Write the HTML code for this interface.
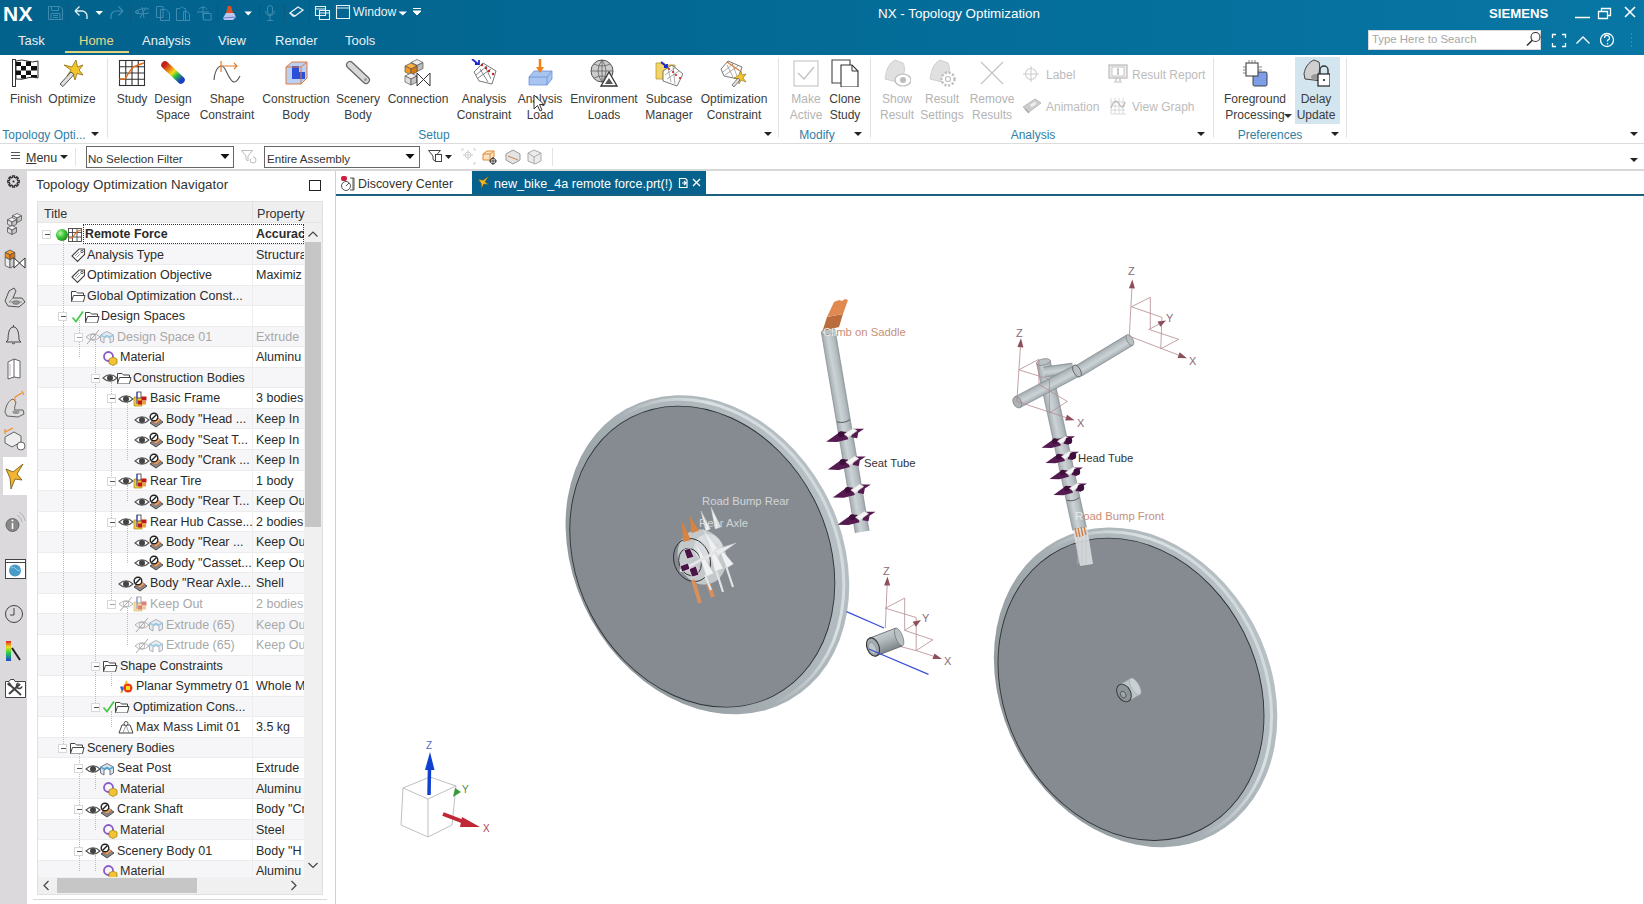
<!DOCTYPE html>
<html><head><meta charset="utf-8">
<style>
*{margin:0;padding:0;box-sizing:border-box}
html,body{width:1644px;height:904px;overflow:hidden;background:#fff;font-family:"Liberation Sans",sans-serif;color:#333}
.a{position:absolute}
#top{left:0;top:0;width:1644px;height:55px;background:linear-gradient(90deg,#02628c 0%,#036a95 45%,#0876a4 100%)}
.tw{color:#fff;white-space:nowrap}
.tab{position:absolute;top:33px;font-size:13px;color:#e8f0f4;white-space:nowrap}
#rib{left:0;top:55px;width:1644px;height:89px;background:#fff;border-bottom:1px solid #dcdcdc}
.rl{position:absolute;font-size:12px;color:#3c3c3c;text-align:center;line-height:16px;white-space:nowrap;transform:translateX(-50%)}
.rl.dis{color:#b4b4b4}
.gl{position:absolute;top:73px;font-size:12px;color:#2f7ea6;white-space:nowrap;transform:translateX(-50%)}
.sep{position:absolute;top:3px;width:1px;height:80px;background:#e2e2e2}
.dd{position:absolute;width:0;height:0;border-left:4px solid transparent;border-right:4px solid transparent;border-top:4px solid #222}
#sel{left:0;top:144px;width:1644px;height:27px;background:#fff;border-bottom:2px solid #d8d8d8}
#strip{left:0;top:171px;width:28px;height:733px;background:#dbd9dc;border-right:1px solid #c4c4c6}
#nav{left:27px;top:171px;width:309px;height:733px;background:#fff;border-right:1px solid #d0d0d0}
#vp{left:336px;top:171px;width:1308px;height:733px;background:#fff}
.row{position:absolute;left:0;width:266px;height:20.55px;font-size:13px;line-height:20px;white-space:nowrap;color:#2a2a2a}
</style></head><body>
<div id="top" class="a">
  <div class="a tw" style="left:3px;top:2px;font-size:21px;font-weight:bold;letter-spacing:0.3px">NX</div>
  <svg class="a" style="left:0;top:0" width="440" height="28" viewBox="0 0 440 28">
    <g stroke="#0a5a7e" stroke-width="1"><path d="M68.5 4V22M130.5 4V22M217.5 4V22M259.5 4V22M284.5 4V22M309.5 4V22"/></g>
    <!-- save dim -->
    <g fill="none" stroke="#3f8bb0" stroke-width="1"><path d="M48.5 6.5H60L62.5 9V19.5H48.5Z M51.5 6.5V10.5H58.5V6.5 M51 13.5H60V19.5H51Z M53 15.5H58 M53 17.5H58"/></g>
    <!-- undo -->
    <path d="M75 11 L79.5 6.5 M75 11 L79.5 15.5 M75 11 H82 A5 5 0 0 1 87 16 V19" fill="none" stroke="#e6f0f5" stroke-width="1.3"/>
    <path d="M95.5 11 H103 L99.2 15 Z" fill="#fff"/>
    <!-- redo dim -->
    <path d="M123 11 L118.5 6.5 M123 11 L118.5 15.5 M123 11 H116 A5 5 0 0 0 111 16 V19" fill="none" stroke="#3f8bb0" stroke-width="1.2"/>
    <!-- cut copy paste -->
    <g fill="none" stroke="#3f8bb0" stroke-width="1"><path d="M136 11 Q140 8 149 9 M136 13 Q141 15 149 13 M142 7 L144 18 M146 7 L140 18"/><circle cx="137" cy="12" r="1.5"/>
    <path d="M156.5 6.5H163V17.5H156.5Z M160.5 9.5H166L169.5 13V20.5H160.5Z"/>
    <path d="M176.5 8.5H180L182 6.5L184 8.5H185.5V20.5H176.5Z M183.5 11.5H187L189.5 14V20.5H183.5Z"/>
    <path d="M197 12H209M203 6V18 M199 9.5 A4.5 4.5 0 0 1 207 9.5"/><path d="M203.5 13.5H211V20H203.5Z"/></g>
    <!-- brush -->
    <path d="M228 6 L231 6 L233 13 L226 13 Z" fill="#e05020"/><path d="M223 18 L226 13 L234 13 L236 17 L233 20 L224 20 Z" fill="#b8c8f0"/><path d="M223 18 L236 17" stroke="#6a80d0"/>
    <path d="M244.5 11.5 H252 L248.2 15.5 Z" fill="#fff"/>
    <!-- mic dim -->
    <g fill="none" stroke="#3f8bb0" stroke-width="1"><rect x="267.5" y="5.5" width="5" height="9" rx="2.5"/><path d="M265.5 11 A4.5 4.5 0 0 0 274.5 11 M270 16V20M267 20.5H273"/></g>
    <!-- eraser -->
    <path d="M290 13 L298 7 L303 10 L295 16 Z" fill="none" stroke="#e8f0f4" stroke-width="1.3"/><path d="M290 13 L293 16 L295 16" stroke="#e8f0f4" stroke-width="1.3" fill="none"/>
    <!-- windows -->
    <g fill="none" stroke="#e6f0f5" stroke-width="1.1"><path d="M315.5 6.5H325.5V15.5H315.5Z M315.5 9H325.5 M319.5 10.5H329.5V19.5H319.5Z M319.5 13H329.5"/>
    <path d="M336.5 5.5H349.5V18.5H336.5Z M336.5 8H349.5"/></g>
    <path d="M413 8.5H421M413 11H421L417 15Z" fill="#fff" stroke="#fff" stroke-width="1"/>
    <path d="M398.5 11.5 H407 L402.7 15.5 Z" fill="#fff"/>
  </svg>
  <div class="a tw" style="left:353px;top:5px;font-size:12.2px;color:#e8f2f6">Window</div>
  <div class="a tw" style="left:0;width:1918px;text-align:center;top:6px;font-size:13.4px">NX - Topology Optimization</div>
  <div class="a tw" style="left:1489px;top:6px;font-size:13.2px;font-weight:bold">SIEMENS</div>
  <svg class="a" style="left:1560px;top:0" width="84" height="28" viewBox="0 0 84 28">
    <path d="M15 17.5H30" stroke="#fff" stroke-width="1.5"/>
    <g fill="none" stroke="#fff" stroke-width="1.3"><path d="M38.5 11.5H47.5V18.5H38.5Z M41.5 11.5V8.5H50.5V15.5H47.5"/></g>
    <path d="M65 7 L75 17 M75 7 L65 17" stroke="#fff" stroke-width="1.6"/>
  </svg>
  <div class="tab" style="left:18px">Task</div>
  <div class="tab" style="left:79px;color:#ead98a">Home</div>
  <div class="a" style="left:65px;top:51px;width:64px;height:2px;background:#e2d27a"></div>
  <div class="tab" style="left:142px">Analysis</div>
  <div class="tab" style="left:218px">View</div>
  <div class="tab" style="left:275px">Render</div>
  <div class="tab" style="left:345px">Tools</div>
  <div class="a" style="left:1368px;top:30px;width:173px;height:20px;background:#fff;border:1px solid #d8d8d8"></div>
  <div class="a" style="left:1372px;top:33px;font-size:11.4px;color:#a6a6a6;white-space:nowrap">Type Here to Search</div>
  <svg class="a" style="left:1520px;top:28px" width="124" height="24" viewBox="0 0 124 24">
    <circle cx="15.5" cy="9" r="4.5" fill="none" stroke="#333" stroke-width="1.1"/><path d="M12.5 12 L7 17.5" stroke="#333" stroke-width="1.6"/>
    <g fill="none" stroke="#fff" stroke-width="1.3"><path d="M32.5 10V6.5H36 M42 6.5H45.5V10 M45.5 15V18.5H42 M36 18.5H32.5V15"/>
    <path d="M56.5 15.5 L63 9 L69.5 15.5"/><circle cx="87" cy="12" r="6.5"/></g>
    <path d="M84.5 10 A2.5 2.5 0 1 1 87.5 12.3 V13.5" fill="none" stroke="#fff" stroke-width="1.2"/><circle cx="87.5" cy="15.8" r="0.8" fill="#fff"/>
    <path d="M111.5 5V19" stroke="#3f8bb0" stroke-width="1" stroke-dasharray="2 2"/>
  </svg>
</div>
<div id="rib" class="a">
<div class="a" style="left:1295px;top:2px;width:45px;height:67px;background:#d3e5ee"></div>
<svg class="a" style="left:12.0px;top:4px" width="28" height="28" viewBox="0 0 28 28" ><rect x="0.5" y="0.5" width="3" height="27" fill="#fff" stroke="#333" stroke-width="1"/>
<path d="M4 2 Q10 0 15 2 T26 2 L26 19 Q20 17 15 19 T4 20 Z" fill="#fff" stroke="#333" stroke-width="1"/>
<g fill="#111"><rect x="4" y="3" width="5" height="4"/><rect x="14" y="2.5" width="5" height="4.5"/><rect x="9" y="7" width="5" height="4.5"/><rect x="19" y="7" width="6" height="4.5"/><rect x="4" y="11.5" width="5" height="4.5"/><rect x="14" y="11.5" width="5" height="4.5"/><rect x="9" y="16" width="5" height="3.5"/><rect x="19" y="16" width="6" height="2.5"/></g></svg>
<div class="rl" style="left:26px;top:36px">Finish</div>
<svg class="a" style="left:58.0px;top:4px" width="28" height="28" viewBox="0 0 28 28" ><path d="M18 1 L19.5 8 L25 6 L21 11 L25 16 L19 14.5 L17 21 L15 15 L9 17 L13 11 L6 6 L14 8 Z" fill="#f3c52a" stroke="#8a6d10" stroke-width="0.8"/>
<path d="M2 25 L13 13 L16 15.5 L5 27.5 Z" fill="#ddd" stroke="#444" stroke-width="0.9"/></svg>
<div class="rl" style="left:72px;top:36px">Optimize</div>
<svg class="a" style="left:118.0px;top:4px" width="28" height="28" viewBox="0 0 28 28" ><g fill="none" stroke="#333" stroke-width="1.1"><rect x="1.5" y="1.5" width="25" height="25"/><path d="M7.75 1.5V26.5M14 1.5V26.5M20.25 1.5V26.5M1.5 7.75H26.5M1.5 14H26.5M1.5 20.25H26.5"/></g>
<path d="M1.5 20 L7 20 L12 12 L15 8 L20 6 L26 4" fill="none" stroke="#e06a1a" stroke-width="1.4"/></svg>
<div class="rl" style="left:132px;top:36px">Study</div>
<svg class="a" style="left:159.0px;top:4px" width="28" height="28" viewBox="0 0 28 28" ><defs><linearGradient id="gds" x1="0" y1="0" x2="1" y2="1"><stop offset="0" stop-color="#c0231a"/><stop offset="0.3" stop-color="#f08a10"/><stop offset="0.5" stop-color="#e8e020"/><stop offset="0.7" stop-color="#30c040"/><stop offset="1" stop-color="#1a40c0"/></linearGradient></defs>
<line x1="6" y1="6" x2="22" y2="21" stroke="url(#gds)" stroke-width="7.5" stroke-linecap="round"/></svg>
<div class="rl" style="left:173px;top:36px">Design<br>Space</div>
<svg class="a" style="left:213.0px;top:4px" width="28" height="28" viewBox="0 0 28 28" ><path d="M1 21 C2 9, 8 3, 12 10 S 20 31, 27 17" fill="none" stroke="#555" stroke-width="1.1"/>
<path d="M8 2 V13 M8 7 H24 M21 4 L24 7 L21 10" fill="none" stroke="#e07e30" stroke-width="1.2"/></svg>
<div class="rl" style="left:227px;top:36px">Shape<br>Constraint</div>
<svg class="a" style="left:282.0px;top:4px" width="28" height="28" viewBox="0 0 28 28" ><path d="M4 8 L10 3 L25 3 L25 19 L19 25 L4 25 Z" fill="#bcd0f4" stroke="#e07a40" stroke-width="1"/>
<path d="M10 7 L17 7 L17 13 L23 13 L23 20 L10 20 Z" fill="#2a4fd8"/><path d="M4 8 L19 8 L19 25 M19 8 L25 3" fill="none" stroke="#e07a40" stroke-width="1"/></svg>
<div class="rl" style="left:296px;top:36px">Construction<br>Body</div>
<svg class="a" style="left:344.0px;top:4px" width="28" height="28" viewBox="0 0 28 28" ><line x1="6" y1="6" x2="22" y2="21" stroke="#666" stroke-width="8" stroke-linecap="round"/><line x1="6" y1="6" x2="22" y2="21" stroke="#d8d8d8" stroke-width="5.5" stroke-linecap="round"/><circle cx="21.5" cy="20.5" r="1.5" fill="#999"/></svg>
<div class="rl" style="left:358px;top:36px">Scenery<br>Body</div>
<svg class="a" style="left:404.0px;top:4px" width="28" height="28" viewBox="0 0 28 28" ><path d="M13 0.5 L19 3.5 L13 6.5 L7 3.5 Z" fill="#eeeeee" stroke="#555" stroke-width="0.7"/><path d="M7 3.5 L13 6.5 L13 12.5 L7 9.5 Z" fill="#d8d8d8" stroke="#555" stroke-width="0.7"/><path d="M13 6.5 L19 3.5 L19 9.5 L13 12.5 Z" fill="#bcbcbc" stroke="#555" stroke-width="0.7"/><path d="M7 4 L13 7.0 L7 10.0 L1 7.0 Z" fill="#ffb040" stroke="#555" stroke-width="0.7"/><path d="M1 7.0 L7 10.0 L7 16.0 L1 13.0 Z" fill="#f59a20" stroke="#555" stroke-width="0.7"/><path d="M7 10.0 L13 7.0 L13 13.0 L7 16.0 Z" fill="#d87810" stroke="#555" stroke-width="0.7"/><path d="M7 14 L13 17.0 L7 20.0 L1 17.0 Z" fill="#eeeeee" stroke="#555" stroke-width="0.7"/><path d="M1 17.0 L7 20.0 L7 26.0 L1 23.0 Z" fill="#e0e0e0" stroke="#555" stroke-width="0.7"/><path d="M7 20.0 L13 17.0 L13 23.0 L7 26.0 Z" fill="#c4c4c4" stroke="#555" stroke-width="0.7"/><path d="M13 27 L13 14 L26 27 L26 14 Z" fill="#fff" stroke="#333" stroke-width="1"/></svg>
<div class="rl" style="left:418px;top:36px">Connection</div>
<svg class="a" style="left:470.0px;top:4px" width="28" height="28" viewBox="0 0 28 28" ><path d="M4 13 L13 4 L26 12 L22 25 L9 22 Z" fill="#fff" stroke="#555" stroke-width="0.8"/><path d="M6 16 L17 7 M8 19 L21 10 M10 10 L18 23 M15 7 L21 20" fill="none" stroke="#555" stroke-width="0.7"/>
<g fill="#d02020"><circle cx="12" cy="6" r="1.2"/><circle cx="16" cy="9" r="1.2"/><circle cx="19" cy="12" r="1.2"/><circle cx="23" cy="15" r="1.2"/></g><path d="M2 0 L8 5 M5 5 L9 5 L9 1" stroke="#1a2ad0" stroke-width="1.8" fill="none"/></svg>
<div class="rl" style="left:484px;top:36px">Analysis<br>Constraint</div>
<svg class="a" style="left:526.0px;top:4px" width="28" height="28" viewBox="0 0 28 28" ><path d="M3 18 L8 12 L26 12 L26 20 L21 26 L3 26 Z" fill="#a8c4f0" stroke="#6a90d8" stroke-width="0.8"/><path d="M3 18 L21 18 L26 12 M21 18 L21 26" fill="none" stroke="#6a90d8" stroke-width="0.8"/>
<path d="M14 0 V10" stroke="#f08010" stroke-width="2.5"/><path d="M10 8 L14 14 L18 8 Z" fill="#f08010"/></svg>
<div class="rl" style="left:540px;top:36px">Analysis<br>Load</div>
<svg class="a" style="left:590.0px;top:4px" width="28" height="28" viewBox="0 0 28 28" ><circle cx="12" cy="12" r="11" fill="#ccc" stroke="#555" stroke-width="1"/><path d="M1 12 H23 M12 1 V23 M4 5 Q12 9 20 5 M4 19 Q12 15 20 19 M12 1 Q4 12 12 23 M12 1 Q20 12 12 23" fill="none" stroke="#555" stroke-width="0.7"/>
<path d="M19 13 L27 27 L11 27 Z" fill="#fff" stroke="#333" stroke-width="1.3"/><path d="M19 19 L23 25 L15 25 Z" fill="#555"/></svg>
<div class="rl" style="left:604px;top:36px">Environment<br>Loads</div>
<svg class="a" style="left:655.0px;top:4px" width="28" height="28" viewBox="0 0 28 28" ><path d="M1 4 L9 4 L11 6 L20 6 L20 20 L1 20 Z" fill="#f3d468" stroke="#b89a30" stroke-width="0.8"/>
<path d="M8 12 L17 6 L28 15 L22 27 L8 22 Z" fill="#fff" stroke="#555" stroke-width="0.8"/><path d="M10 16 L20 9 M12 20 L24 12 M13 9 L16 23 M18 7 L20 25" fill="none" stroke="#777" stroke-width="0.6"/>
<g fill="#d02020"><circle cx="14" cy="10" r="1.1"/><circle cx="18" cy="13" r="1.1"/><circle cx="21" cy="16" r="1.1"/><circle cx="25" cy="19" r="1.1"/></g><path d="M6 3 L12 8 M9 8 L12 8 L12 5" stroke="#1a2ad0" stroke-width="1.8" fill="none"/></svg>
<div class="rl" style="left:669px;top:36px">Subcase<br>Manager</div>
<svg class="a" style="left:720.0px;top:4px" width="28" height="28" viewBox="0 0 28 28" ><path d="M1 10 L8 2 L22 8 L18 20 L4 17 Z" fill="#fff" stroke="#555" stroke-width="0.8"/><path d="M3 13 L13 5 M5 16 L18 7 M7 6 L13 18 M12 4 L17 17" fill="none" stroke="#777" stroke-width="0.6"/><path d="M7 3 L20 12" stroke="#e08030" stroke-width="1.2"/>
<path d="M21 12 L22 16 L26 15 L23 19 L26 23 L21 21 L19 25 L18 20 L14 19 L18 17 Z" fill="#f3c52a" stroke="#8a6d10" stroke-width="0.6"/><path d="M12 26 L18 19 L20 21 L14 28 Z" fill="#ddd" stroke="#555" stroke-width="0.7"/></svg>
<div class="rl" style="left:734px;top:36px">Optimization<br>Constraint</div>
<svg class="a" style="left:792.0px;top:4px" width="28" height="28" viewBox="0 0 28 28" ><rect x="2" y="2" width="24" height="25" fill="#fff" stroke="#c8c8c8" stroke-width="1.2"/><path d="M6 14 L12 20 L22 8" fill="none" stroke="#c0c0c0" stroke-width="1.3"/></svg>
<div class="rl dis" style="left:806px;top:36px">Make<br>Active</div>
<svg class="a" style="left:831.0px;top:4px" width="28" height="28" viewBox="0 0 28 28" ><path d="M1 1 H19 V24 H1 Z" fill="#fff" stroke="#444" stroke-width="1.1"/><path d="M10 6 H21 L27 12 V28 H10 Z" fill="#fff" stroke="#333" stroke-width="1.1"/><path d="M21 6 V12 H27" fill="none" stroke="#333" stroke-width="1"/></svg>
<div class="rl" style="left:845px;top:36px">Clone<br>Study</div>
<svg class="a" style="left:883.0px;top:4px" width="28" height="28" viewBox="0 0 28 28" ><path d="M3 15 C4 8 8 3 12 1 L20 4 C22 8 22 12 20 17 L18 24 L2 20 Z" fill="#e0e0e0" stroke="#cfcfcf" stroke-width="1"/><ellipse cx="20" cy="21" rx="8" ry="6" fill="#fff" stroke="#bbb" stroke-width="1.2"/><circle cx="20" cy="21" r="3" fill="#bcbcbc"/></svg>
<div class="rl dis" style="left:897px;top:36px">Show<br>Result</div>
<svg class="a" style="left:928.0px;top:4px" width="28" height="28" viewBox="0 0 28 28" ><path d="M3 15 C4 8 8 3 12 1 L20 4 C22 8 22 12 20 17 L18 24 L2 20 Z" fill="#e0e0e0" stroke="#cfcfcf" stroke-width="1"/><circle cx="20" cy="20" r="6.5" fill="#fff" stroke="#c0c0c0" stroke-width="2.5" stroke-dasharray="2.2 1.6"/><circle cx="20" cy="20" r="2.5" fill="#fff" stroke="#c0c0c0" stroke-width="1.2"/></svg>
<div class="rl dis" style="left:942px;top:36px">Result<br>Settings</div>
<svg class="a" style="left:978.0px;top:4px" width="28" height="28" viewBox="0 0 28 28" ><path d="M3 3 L25 25 M25 3 L3 25" stroke="#c4c4c4" stroke-width="1.2"/></svg>
<div class="rl dis" style="left:992px;top:36px">Remove<br>Results</div>
<svg class="a" style="left:1242.0px;top:4px" width="28" height="28" viewBox="0 0 28 28" ><rect x="11" y="13" width="14" height="14" rx="1.5" fill="#7f9ee8" stroke="#333" stroke-width="0.9"/><rect x="4" y="4" width="12" height="13" fill="#fff" stroke="#444" stroke-width="1.1"/><path d="M7 1V4M10 1V4M13 1V4M1 8H4M1 11H4M1 14H4M16 8H20M16 11H20" stroke="#666" stroke-width="0.8"/></svg>
<div class="rl" style="left:1255px;top:36px">Foreground<br>Processing</div>
<svg class="a" style="left:1302.0px;top:4px" width="28" height="28" viewBox="0 0 28 28" ><path d="M2 15 C3 8 7 3 12 1 L17 3 C18 7 18 12 16 17 L20 22 L3 20 Z" fill="#cfcfcf" stroke="#444" stroke-width="1"/><ellipse cx="14" cy="18" rx="5" ry="3" fill="#999"/><path d="M18 15 V11 A4 4 0 0 1 26 11 V15" fill="none" stroke="#333" stroke-width="1.4"/><rect x="16" y="15" width="12" height="12" fill="#fff" stroke="#222" stroke-width="1.2"/><circle cx="22" cy="21" r="1.1" fill="#222"/></svg>
<div class="rl" style="left:1316px;top:36px">Delay<br>Update</div>
<div class="dd" style="left:1283.5px;top:59px;border-top-color:#333"></div>
<svg class="a" style="left:533px;top:38.5px" width="14" height="20" viewBox="0 0 14 20"><path d="M1 1 L1 15 L4.5 11.5 L7 17 L9 16 L6.5 10.5 L11 10.5 Z" fill="#fff" stroke="#333" stroke-width="1"/></svg>
<svg class="a" style="left:1022px;top:10px" width="18" height="18" viewBox="0 0 18 18"><circle cx="9" cy="9" r="5.5" fill="none" stroke="#ccc" stroke-width="1.1"/><path d="M9 1V17M1 9H17" stroke="#ccc" stroke-width="1.1"/></svg>
<div class="a" style="left:1046px;top:13px;font-size:12px;color:#bcbcbc">Label</div>
<svg class="a" style="left:1022px;top:42px" width="20" height="18" viewBox="0 0 20 18"><path d="M1 10 L13 2 L19 6 L7 15 Z" fill="#ccc" stroke="#bbb"/><path d="M3 12 L7 16" stroke="#aaa" stroke-width="1.5"/><rect x="8" y="6" width="6" height="3" fill="#eee" transform="rotate(-33 11 7)"/></svg>
<div class="a" style="left:1046px;top:45px;font-size:12px;color:#bcbcbc">Animation</div>
<svg class="a" style="left:1108px;top:9px" width="20" height="20" viewBox="0 0 20 20"><rect x="1" y="1" width="18" height="13" fill="#eee" stroke="#bbb" stroke-width="1.2"/><rect x="4" y="3" width="12" height="9" fill="#fff" stroke="#c8c8c8"/><path d="M10 5V10M9 5H11M9 10H11" stroke="#aaa" stroke-width="1.2"/><path d="M8 14V17M12 14V17M6 18H14" stroke="#bbb" stroke-width="1.2"/></svg>
<div class="a" style="left:1132px;top:13px;font-size:12px;color:#bcbcbc">Result Report</div>
<svg class="a" style="left:1108px;top:41px" width="20" height="20" viewBox="0 0 20 20"><path d="M3 2 V18 H18 M3 6 H17 M3 10 H17 M3 14 H17 M7 2 V18 M11 2 V18 M15 2 V18" fill="none" stroke="#d0d0d0" stroke-width="0.8"/><path d="M3 12 Q7 1 11 8 T17 6" fill="none" stroke="#bbb" stroke-width="1.3"/></svg>
<div class="a" style="left:1132px;top:45px;font-size:12px;color:#bcbcbc">View Graph</div>
<div class="gl" style="left:44px">Topology Opti...</div>
<div class="gl" style="left:434px">Setup</div>
<div class="gl" style="left:817px">Modify</div>
<div class="gl" style="left:1033px">Analysis</div>
<div class="gl" style="left:1270px">Preferences</div>
<div class="dd" style="left:91px;top:77px"></div>
<div class="dd" style="left:764px;top:77px"></div>
<div class="dd" style="left:854px;top:77px"></div>
<div class="dd" style="left:1197px;top:77px"></div>
<div class="dd" style="left:1331px;top:77px"></div>
<div class="dd" style="left:1630px;top:77px"></div>
<div class="sep" style="left:107px"></div>
<div class="sep" style="left:778px"></div>
<div class="sep" style="left:870px"></div>
<div class="sep" style="left:1213px"></div>
<div class="sep" style="left:1346px"></div>
</div><div id="sel" class="a">
  <svg class="a" style="left:0;top:0" width="560" height="27" viewBox="0 144 560 27">
    <path d="M11 152.5H20M11 155.5H20M11 158.5H20" stroke="#555" stroke-width="1"/>
    <path d="M60 155H68L64 159Z" fill="#222"/>
    <path d="M75.5 148V166" stroke="#e4e4e4"/>
    <rect x="86.5" y="146.5" width="147" height="21" fill="#fff" stroke="#666" stroke-width="1"/>
    <path d="M220.5 154H229.5L225 159Z" fill="#111"/>
    <g fill="none" stroke="#bdbdbd" stroke-width="1"><path d="M241.5 150.5H252.5L248 156V161L246 159.5V156Z"/><path d="M250 160 A3 3 0 1 0 253 157 M250 160 L251 158.5"/></g>
    <rect x="264.5" y="146.5" width="155" height="21" fill="#fff" stroke="#666" stroke-width="1"/>
    <path d="M405.5 154H414.5L410 159Z" fill="#111"/>
    <g fill="none" stroke="#444" stroke-width="1"><path d="M428.5 150.5H440.5L435.5 156V161L433 159.5V156Z"/><rect x="435.5" y="154.5" width="6" height="7" fill="#fff"/></g>
    <path d="M445 155H452L448.5 159Z" fill="#222"/>
    <g fill="none" stroke="#cfcfcf" stroke-width="1"><path d="M462 151V149H464 M473 149H475V151 M475 162V164H473"/><circle cx="468" cy="155" r="3"/><path d="M463 155H473M468 150V160"/></g>
    <g stroke="#e08a30" fill="#fbe3c8" stroke-width="1"><path d="M483 154L487 151L494 151L494 157L490 160L483 160Z"/><path d="M483 154H490V160M490 154L494 151" fill="none"/></g>
    <g stroke="#333" fill="none" stroke-width="0.9"><circle cx="493" cy="161" r="2.8"/><path d="M489 161H497M493 157V165"/></g>
    <g stroke="#999" fill="#e4e4e4" stroke-width="1"><path d="M506 154L513 150L520 154L520 160L513 164L506 160Z"/><path d="M508 156L518 160" stroke="#d08040"/></g>
    <g stroke="#aaa" fill="#ececec" stroke-width="1"><path d="M528 153L534 150L541 153L541 161L535 164L528 161Z"/><path d="M534 157V163M534 157L541 153M528 153L534 157" fill="none"/></g>
    <path d="M552.5 148V166" stroke="#e4e4e4"/>
  </svg>
  <div class="a" style="left:26px;top:7px;font-size:12.5px;color:#333;white-space:nowrap"><span style="text-decoration:underline">M</span>enu</div>
  <div class="a" style="left:88px;top:7.5px;font-size:11.6px;color:#333;white-space:nowrap">No Selection Filter</div>
  <div class="a" style="left:267px;top:7.5px;font-size:11.6px;color:#333;white-space:nowrap">Entire Assembly</div>
  <div class="dd" style="left:1630px;top:14px"></div>
</div>
<div id="strip" class="a"><div class="a" style="left:3px;top:286px;width:24px;height:38px;background:#fff"></div></div>
<svg class="a" style="left:0;top:171px" width="27" height="733" viewBox="0 171 27 733"><path d="M19.21 180.46 L19.21 182.54 L17.70 182.41 L17.11 183.83 L18.27 184.80 L16.80 186.27 L15.83 185.11 L14.41 185.70 L14.54 187.21 L12.46 187.21 L12.59 185.70 L11.17 185.11 L10.20 186.27 L8.73 184.80 L9.89 183.83 L9.30 182.41 L7.79 182.54 L7.79 180.46 L9.30 180.59 L9.89 179.17 L8.73 178.20 L10.20 176.73 L11.17 177.89 L12.59 177.30 L12.46 175.79 L14.54 175.79 L14.41 177.30 L15.83 177.89 L16.80 176.73 L18.27 178.20 L17.11 179.17 L17.70 180.59 Z" fill="none" stroke="#333" stroke-width="1.3"/><circle cx="13.5" cy="181.5" r="1.1" fill="#333"/><path d="M17 213.5 L21.5 215.75 L17 218.0 L12.5 215.75 Z" fill="#f2f2f2" stroke="#555" stroke-width="0.8"/><path d="M12.5 215.75 L17 218.0 L17 222.5 L12.5 220.25 Z" fill="#dcdcdc" stroke="#555" stroke-width="0.8"/><path d="M17 218.0 L21.5 215.75 L21.5 220.25 L17 222.5 Z" fill="#c4c4c4" stroke="#555" stroke-width="0.8"/><path d="M12 217.5 L16.5 219.75 L12 222.0 L7.5 219.75 Z" fill="#f2f2f2" stroke="#555" stroke-width="0.8"/><path d="M7.5 219.75 L12 222.0 L12 226.5 L7.5 224.25 Z" fill="#dcdcdc" stroke="#555" stroke-width="0.8"/><path d="M12 222.0 L16.5 219.75 L16.5 224.25 L12 226.5 Z" fill="#c4c4c4" stroke="#555" stroke-width="0.8"/><path d="M12 225.5 L16.5 227.75 L12 230.0 L7.5 227.75 Z" fill="#f2f2f2" stroke="#555" stroke-width="0.8"/><path d="M7.5 227.75 L12 230.0 L12 234.5 L7.5 232.25 Z" fill="#dcdcdc" stroke="#555" stroke-width="0.8"/><path d="M12 230.0 L16.5 227.75 L16.5 232.25 L12 234.5 Z" fill="#c4c4c4" stroke="#555" stroke-width="0.8"/><path d="M10 250 L14.8 252.4 L10 254.8 L5.2 252.4 Z" fill="#f6a030" stroke="#555" stroke-width="0.8"/><path d="M5.2 252.4 L10 254.8 L10 259.6 L5.2 257.2 Z" fill="#f08a18" stroke="#555" stroke-width="0.8"/><path d="M10 254.8 L14.8 252.4 L14.8 257.2 L10 259.6 Z" fill="#d87410" stroke="#555" stroke-width="0.8"/><path d="M5.2 257.4 L10 259.8 L10 268 L5.2 265.6 Z" fill="#eee" stroke="#555" stroke-width="0.8"/><path d="M10 259.8 L14.8 257.4 L14.8 265.6 L10 268 Z" fill="#d0d0d0" stroke="#555" stroke-width="0.8"/><path d="M14 268 L14 258 L25 268 L25 258 Z" fill="#fff" stroke="#333" stroke-width="1"/><path d="M5 301 L9 291 L14 288 L16 291 L13 298 L22 298 L25 302 L19 307 L8 306 Z" fill="#d8d8d8" stroke="#444" stroke-width="0.9"/><path d="M13 298 L9 302 L22 302" fill="none" stroke="#777" stroke-width="0.7"/><ellipse cx="16" cy="302.5" rx="3.5" ry="1.8" fill="#999" stroke="#555" stroke-width="0.6"/><path d="M8 340 C8 334 9 327 13.5 327 C18 327 19 334 19 340 L21 342 H6 Z" fill="none" stroke="#444" stroke-width="1"/><path d="M12 343 A1.8 1.8 0 0 0 15 343" fill="none" stroke="#444"/><path d="M13.5 325V327" stroke="#444"/><path d="M8 362 L14 359 V377 L8 379 Z M14 359 L20 361 V378 L14 377" fill="#fff" stroke="#555" stroke-width="0.9"/><path d="M10 364 V376" stroke="#888" stroke-width="0.6"/><path d="M5 412 C6 405 9 400 13 399 L16 402 C15 406 14 408 15 410 L23 410 L24 414 L18 417 L7 416 Z" fill="#ddd" stroke="#555" stroke-width="0.9"/><ellipse cx="16" cy="412" rx="3.5" ry="2" fill="#999"/><path d="M15 397 L22 393 M22 391 L24 395 M15 397 V402" stroke="#f08a20" stroke-width="1.1" fill="none"/><path d="M5 437 L14 432 L21 436 L21 442 L12 447 L5 443Z" fill="#eee" stroke="#555" stroke-width="0.9"/><circle cx="21" cy="446" r="4" fill="#fff" stroke="#555" stroke-width="0.9"/><path d="M5 432 L13 428 M5 429 V434" stroke="#f08a20" stroke-width="1.1" fill="none"/><path d="M6 469 L13 472 L23 464 L17 474 L22 480 L15 479 L11 489 L10 478 Z" fill="#f5b530" stroke="#6a5010" stroke-width="0.8"/><circle cx="12.5" cy="525" r="6.5" fill="#888" stroke="#555" stroke-width="0.8"/><path d="M12.5 523V529" stroke="#fff" stroke-width="1.6"/><circle cx="12.5" cy="520.5" r="1" fill="#fff"/><path d="M17 515 A9 9 0 0 1 22 522 M19 512 A12 12 0 0 1 25 521" fill="none" stroke="#aaa" stroke-width="0.8"/><rect x="5.5" y="559.5" width="20" height="19" fill="#fff" stroke="#444" stroke-width="1"/><path d="M5.5 562.5H25.5" stroke="#444"/><circle cx="15" cy="570.5" r="6" fill="#4a9ac8"/><path d="M11 568 Q14 566 16 569 Q18 572 20 570" stroke="#8ad0f0" fill="none"/><circle cx="14" cy="614" r="8.5" fill="none" stroke="#444" stroke-width="1"/><path d="M14 608 V615 H10" fill="none" stroke="#444" stroke-width="1"/><defs><linearGradient id="gcb" x1="0" y1="0" x2="0" y2="1"><stop offset="0" stop-color="#e02020"/><stop offset="0.3" stop-color="#f0e020"/><stop offset="0.6" stop-color="#20d040"/><stop offset="1" stop-color="#2040e0"/></linearGradient></defs><rect x="6" y="641" width="5" height="20" fill="url(#gcb)"/><path d="M12 648 L20 660" stroke="#222" stroke-width="2"/><path d="M5.5 681.5 H9 L10.5 679.5 H14 L15 681.5 H25.5 V697.5 H5.5 Z" fill="#fff" stroke="#444" stroke-width="1"/><path d="M9 694 L20 684" stroke="#444" stroke-width="2.2"/><path d="M18.5 683 A2.8 2.8 0 1 0 22 686.5" fill="none" stroke="#444" stroke-width="1.6"/><path d="M9 684 L21 695" stroke="#444" stroke-width="2"/><path d="M8 683 L10.5 685.5" stroke="#444" stroke-width="3"/></svg>
<div id="nav" class="a"></div>
<div class="a" style="left:36px;top:177px;font-size:13.35px;color:#333;white-space:nowrap">Topology Optimization Navigator</div>
<div class="a" style="left:309px;top:180px;width:12px;height:11px;border:1.5px solid #222"></div>
<div class="a" style="left:37px;top:201px;width:286px;height:694px;border:1px solid #e0e0e0;background:#fff"></div>
<div class="a" style="left:38px;top:202px;width:284px;height:21px;background:#efefef;border-bottom:1px solid #e6e6e6"></div>
<div class="a" style="left:252px;top:202px;width:1px;height:21px;background:#e2e2e2"></div>
<div class="a" style="left:44px;top:206.5px;font-size:12.6px;color:#333">Title</div>
<div class="a" style="left:257px;top:206.5px;font-size:12.6px;color:#333">Property</div>
<div class="a" style="left:38px;top:223px;width:266px;height:654px;overflow:hidden">
<div class="a" style="left:0;top:1.00px;width:266px;height:20.55px;background:#ffffff;border-bottom:1px solid #ececee"></div>
<div class="a" style="left:0;top:21.55px;width:266px;height:20.55px;background:#f6f6f8;border-bottom:1px solid #ececee"></div>
<div class="a" style="left:0;top:42.10px;width:266px;height:20.55px;background:#ffffff;border-bottom:1px solid #ececee"></div>
<div class="a" style="left:0;top:62.65px;width:266px;height:20.55px;background:#f6f6f8;border-bottom:1px solid #ececee"></div>
<div class="a" style="left:0;top:83.20px;width:266px;height:20.55px;background:#ffffff;border-bottom:1px solid #ececee"></div>
<div class="a" style="left:0;top:103.75px;width:266px;height:20.55px;background:#f6f6f8;border-bottom:1px solid #ececee"></div>
<div class="a" style="left:0;top:124.30px;width:266px;height:20.55px;background:#ffffff;border-bottom:1px solid #ececee"></div>
<div class="a" style="left:0;top:144.85px;width:266px;height:20.55px;background:#f6f6f8;border-bottom:1px solid #ececee"></div>
<div class="a" style="left:0;top:165.40px;width:266px;height:20.55px;background:#ffffff;border-bottom:1px solid #ececee"></div>
<div class="a" style="left:0;top:185.95px;width:266px;height:20.55px;background:#f6f6f8;border-bottom:1px solid #ececee"></div>
<div class="a" style="left:0;top:206.50px;width:266px;height:20.55px;background:#ffffff;border-bottom:1px solid #ececee"></div>
<div class="a" style="left:0;top:227.05px;width:266px;height:20.55px;background:#f6f6f8;border-bottom:1px solid #ececee"></div>
<div class="a" style="left:0;top:247.60px;width:266px;height:20.55px;background:#ffffff;border-bottom:1px solid #ececee"></div>
<div class="a" style="left:0;top:268.15px;width:266px;height:20.55px;background:#f6f6f8;border-bottom:1px solid #ececee"></div>
<div class="a" style="left:0;top:288.70px;width:266px;height:20.55px;background:#ffffff;border-bottom:1px solid #ececee"></div>
<div class="a" style="left:0;top:309.25px;width:266px;height:20.55px;background:#f6f6f8;border-bottom:1px solid #ececee"></div>
<div class="a" style="left:0;top:329.80px;width:266px;height:20.55px;background:#ffffff;border-bottom:1px solid #ececee"></div>
<div class="a" style="left:0;top:350.35px;width:266px;height:20.55px;background:#f6f6f8;border-bottom:1px solid #ececee"></div>
<div class="a" style="left:0;top:370.90px;width:266px;height:20.55px;background:#ffffff;border-bottom:1px solid #ececee"></div>
<div class="a" style="left:0;top:391.45px;width:266px;height:20.55px;background:#f6f6f8;border-bottom:1px solid #ececee"></div>
<div class="a" style="left:0;top:412.00px;width:266px;height:20.55px;background:#ffffff;border-bottom:1px solid #ececee"></div>
<div class="a" style="left:0;top:432.55px;width:266px;height:20.55px;background:#f6f6f8;border-bottom:1px solid #ececee"></div>
<div class="a" style="left:0;top:453.10px;width:266px;height:20.55px;background:#ffffff;border-bottom:1px solid #ececee"></div>
<div class="a" style="left:0;top:473.65px;width:266px;height:20.55px;background:#f6f6f8;border-bottom:1px solid #ececee"></div>
<div class="a" style="left:0;top:494.20px;width:266px;height:20.55px;background:#ffffff;border-bottom:1px solid #ececee"></div>
<div class="a" style="left:0;top:514.75px;width:266px;height:20.55px;background:#f6f6f8;border-bottom:1px solid #ececee"></div>
<div class="a" style="left:0;top:535.30px;width:266px;height:20.55px;background:#ffffff;border-bottom:1px solid #ececee"></div>
<div class="a" style="left:0;top:555.85px;width:266px;height:20.55px;background:#f6f6f8;border-bottom:1px solid #ececee"></div>
<div class="a" style="left:0;top:576.40px;width:266px;height:20.55px;background:#ffffff;border-bottom:1px solid #ececee"></div>
<div class="a" style="left:0;top:596.95px;width:266px;height:20.55px;background:#f6f6f8;border-bottom:1px solid #ececee"></div>
<div class="a" style="left:0;top:617.50px;width:266px;height:20.55px;background:#ffffff;border-bottom:1px solid #ececee"></div>
<div class="a" style="left:0;top:638.05px;width:266px;height:20.55px;background:#f6f6f8;border-bottom:1px solid #ececee"></div>
<div class="a" style="left:25px;top:15.0px;width:1px;height:509.8px;border-left:1px dotted #bbb"></div>
<div class="a" style="left:41px;top:97.2px;width:1px;height:37.1px;border-left:1px dotted #bbb"></div>
<div class="a" style="left:57px;top:117.8px;width:1px;height:365.9px;border-left:1px dotted #bbb"></div>
<div class="a" style="left:73px;top:158.9px;width:1px;height:222.1px;border-left:1px dotted #bbb"></div>
<div class="a" style="left:89px;top:179.4px;width:1px;height:57.7px;border-left:1px dotted #bbb"></div>
<div class="a" style="left:89px;top:261.6px;width:1px;height:16.6px;border-left:1px dotted #bbb"></div>
<div class="a" style="left:89px;top:302.7px;width:1px;height:37.1px;border-left:1px dotted #bbb"></div>
<div class="a" style="left:89px;top:384.9px;width:1px;height:37.1px;border-left:1px dotted #bbb"></div>
<div class="a" style="left:41px;top:528.8px;width:1px;height:119.3px;border-left:1px dotted #bbb"></div>
<div class="a" style="left:57px;top:549.3px;width:1px;height:16.5px;border-left:1px dotted #bbb"></div>
<div class="a" style="left:57px;top:590.4px;width:1px;height:16.6px;border-left:1px dotted #bbb"></div>
<div class="a" style="left:57px;top:631.5px;width:1px;height:16.6px;border-left:1px dotted #bbb"></div>
<div class="a" style="left:73px;top:446.5px;width:1px;height:16.6px;border-left:1px dotted #bbb"></div>
<div class="a" style="left:73px;top:487.7px;width:1px;height:16.5px;border-left:1px dotted #bbb"></div>
<div class="a" style="left:214px;top:1.00px;width:1px;height:20.55px;background:#eeeeee"></div>
<div class="a" style="left:4px;top:7.0px;width:9px;height:9px;border:1px solid #d8d8d8;background:#fff"><div class="a" style="left:1.5px;top:3px;width:5px;height:1px;background:#555;opacity:1.0"></div></div>
<svg class="a" style="left:16px;top:3.5px" width="16" height="16" viewBox="0 0 16 16"><defs><radialGradient id="gb" cx="0.35" cy="0.35" r="0.7"><stop offset="0" stop-color="#b8f5a8"/><stop offset="0.5" stop-color="#3ec83a"/><stop offset="1" stop-color="#1f8a1f"/></radialGradient></defs><circle cx="8" cy="8" r="6" fill="url(#gb)"/></svg>
<svg class="a" style="left:29px;top:3.5px" width="16" height="16" viewBox="0 0 16 16"><g fill="none" stroke="#444" stroke-width="0.9"><rect x="1.5" y="1.5" width="13" height="13"/><path d="M5.5 1.5V14.5M10 1.5V14.5M1.5 5.5H14.5M1.5 10H14.5"/></g><path d="M1.5 11 L5 11 L8 7 L11 4 L14.5 3" fill="none" stroke="#e06a1a" stroke-width="1.1"/></svg>
<div class="a" style="left:47px;top:4.0px;font-size:12.5px;letter-spacing:0px;color:#2b2b2b;font-weight:bold;font-size:12.4px;white-space:nowrap">Remote Force</div>
<div class="a" style="left:218px;top:4.0px;font-size:12.5px;letter-spacing:0px;color:#2b2b2b;font-weight:bold;font-size:12.4px;white-space:nowrap">Accurac</div>
<div class="a" style="left:214px;top:21.55px;width:1px;height:20.55px;background:#eeeeee"></div>
<svg class="a" style="left:32px;top:24.1px" width="16" height="16" viewBox="0 0 16 16"><path d="M2 9 L9 2 L14.5 2 L14.5 7.5 L7.5 14.5 Z" fill="#fff" stroke="#444" stroke-width="1.1"/><circle cx="12" cy="4.5" r="1.2" fill="none" stroke="#444" stroke-width="0.9"/><path d="M5 9L9 5M6.5 10.5L10.5 6.5" stroke="#666" stroke-width="0.7"/></svg>
<div class="a" style="left:49px;top:24.6px;font-size:12.5px;letter-spacing:0px;color:#2b2b2b;font-weight:normal;white-space:nowrap">Analysis Type</div>
<div class="a" style="left:218px;top:24.6px;font-size:12.5px;letter-spacing:0px;color:#2b2b2b;font-weight:normal;white-space:nowrap">Structura</div>
<div class="a" style="left:214px;top:42.10px;width:1px;height:20.55px;background:#eeeeee"></div>
<svg class="a" style="left:32px;top:44.6px" width="16" height="16" viewBox="0 0 16 16"><path d="M2 9 L9 2 L14.5 2 L14.5 7.5 L7.5 14.5 Z" fill="#fff" stroke="#444" stroke-width="1.1"/><circle cx="12" cy="4.5" r="1.2" fill="none" stroke="#444" stroke-width="0.9"/><path d="M5 9L9 5M6.5 10.5L10.5 6.5" stroke="#666" stroke-width="0.7"/></svg>
<div class="a" style="left:49px;top:45.1px;font-size:12.5px;letter-spacing:0px;color:#2b2b2b;font-weight:normal;white-space:nowrap">Optimization Objective</div>
<div class="a" style="left:218px;top:45.1px;font-size:12.5px;letter-spacing:0px;color:#2b2b2b;font-weight:normal;white-space:nowrap">Maximiz</div>
<div class="a" style="left:214px;top:62.65px;width:1px;height:20.55px;background:#eeeeee"></div>
<svg class="a" style="left:32px;top:65.1px" width="16" height="16" viewBox="0 0 16 16"><path d="M1.5 3.5H6L7.5 5H13.5V13.5H1.5Z" fill="#fff" stroke="#444" stroke-width="1"/><path d="M1.5 13.5L3.5 7.5H15L13.5 13.5" fill="#fff" stroke="#444" stroke-width="1"/></svg>
<div class="a" style="left:49px;top:65.6px;font-size:12.5px;letter-spacing:0px;color:#2b2b2b;font-weight:normal;white-space:nowrap">Global Optimization Const...</div>
<div class="a" style="left:214px;top:83.20px;width:1px;height:20.55px;background:#eeeeee"></div>
<div class="a" style="left:20px;top:89.2px;width:9px;height:9px;border:1px solid #d8d8d8;background:#fff"><div class="a" style="left:1.5px;top:3px;width:5px;height:1px;background:#555;opacity:1.0"></div></div>
<svg class="a" style="left:33px;top:85.7px" width="16" height="16" viewBox="0 0 16 16"><path d="M1.5 8.5 L5 12.5 L12 2.5" fill="none" stroke="#4ac84a" stroke-width="1.8"/></svg>
<svg class="a" style="left:46px;top:85.7px" width="16" height="16" viewBox="0 0 16 16"><path d="M1.5 3.5H6L7.5 5H13.5V13.5H1.5Z" fill="#fff" stroke="#444" stroke-width="1"/><path d="M1.5 13.5L3.5 7.5H15L13.5 13.5" fill="#fff" stroke="#444" stroke-width="1"/></svg>
<div class="a" style="left:63px;top:86.2px;font-size:12.5px;letter-spacing:0px;color:#2b2b2b;font-weight:normal;white-space:nowrap">Design Spaces</div>
<div class="a" style="left:214px;top:103.75px;width:1px;height:20.55px;background:#eeeeee"></div>
<div class="a" style="left:36px;top:109.8px;width:9px;height:9px;border:1px solid #d8d8d8;background:#fff"><div class="a" style="left:1.5px;top:3px;width:5px;height:1px;background:#555;opacity:0.55"></div></div>
<svg class="a" style="left:47px;top:106.2px;opacity:0.55" width="16" height="16" viewBox="0 0 16 16"><path d="M1 8 Q8 1.5 15 8 Q8 14.5 1 8Z" fill="none" stroke="#777" stroke-width="1"/><circle cx="8" cy="8" r="2.8" fill="none" stroke="#777" stroke-width="0.9"/><path d="M2 15 L14 1" stroke="#666" stroke-width="1"/></svg>
<svg class="a" style="left:61px;top:106.2px;opacity:0.55" width="16" height="16" viewBox="0 0 16 16"><path d="M1.5 6 L8 2.5 L14.5 6 L14.5 12 L11 14 L11 9 L8 7.5 L5 9 L5 14 L1.5 12 Z" fill="#d8e4ea" stroke="#667" stroke-width="0.9"/><path d="M1.5 6 L5 8 L8 6.5 L11 8 L14.5 6" fill="none" stroke="#4aa8d8" stroke-width="1.5"/></svg>
<div class="a" style="left:79px;top:106.8px;font-size:12.5px;letter-spacing:0px;color:#a8a8a8;font-weight:normal;white-space:nowrap">Design Space 01</div>
<div class="a" style="left:218px;top:106.8px;font-size:12.5px;letter-spacing:0px;color:#a8a8a8;font-weight:normal;white-space:nowrap">Extrude</div>
<div class="a" style="left:214px;top:124.30px;width:1px;height:20.55px;background:#eeeeee"></div>
<svg class="a" style="left:64px;top:126.8px" width="16" height="16" viewBox="0 0 16 16"><circle cx="6.5" cy="6.5" r="4.5" fill="none" stroke="#8a5ac8" stroke-width="1.8"/><path d="M7 9 L11 7 L15 9 L15 13.5 L11 15.5 L7 13.5 Z" fill="#f3c430" stroke="#9a7a10" stroke-width="0.7"/></svg>
<div class="a" style="left:82px;top:127.3px;font-size:12.5px;letter-spacing:0px;color:#2b2b2b;font-weight:normal;white-space:nowrap">Material</div>
<div class="a" style="left:218px;top:127.3px;font-size:12.5px;letter-spacing:0px;color:#2b2b2b;font-weight:normal;white-space:nowrap">Aluminu</div>
<div class="a" style="left:214px;top:144.85px;width:1px;height:20.55px;background:#eeeeee"></div>
<div class="a" style="left:53px;top:150.9px;width:9px;height:9px;border:1px solid #d8d8d8;background:#fff"><div class="a" style="left:1.5px;top:3px;width:5px;height:1px;background:#555;opacity:1.0"></div></div>
<svg class="a" style="left:64px;top:147.4px" width="16" height="16" viewBox="0 0 16 16"><path d="M1 8 Q8 1.5 15 8 Q8 14.5 1 8Z" fill="#fff" stroke="#555" stroke-width="1.1"/><circle cx="8" cy="8" r="3" fill="#444"/></svg>
<svg class="a" style="left:78px;top:147.4px" width="16" height="16" viewBox="0 0 16 16"><path d="M1.5 3.5H6L7.5 5H13.5V13.5H1.5Z" fill="#fff" stroke="#444" stroke-width="1"/><path d="M1.5 13.5L3.5 7.5H15L13.5 13.5" fill="#fff" stroke="#444" stroke-width="1"/></svg>
<div class="a" style="left:95px;top:147.9px;font-size:12.5px;letter-spacing:0px;color:#2b2b2b;font-weight:normal;white-space:nowrap">Construction Bodies</div>
<div class="a" style="left:214px;top:165.40px;width:1px;height:20.55px;background:#eeeeee"></div>
<div class="a" style="left:69px;top:171.4px;width:9px;height:9px;border:1px solid #d8d8d8;background:#fff"><div class="a" style="left:1.5px;top:3px;width:5px;height:1px;background:#555;opacity:1.0"></div></div>
<svg class="a" style="left:80px;top:167.9px" width="16" height="16" viewBox="0 0 16 16"><path d="M1 8 Q8 1.5 15 8 Q8 14.5 1 8Z" fill="#fff" stroke="#555" stroke-width="1.1"/><circle cx="8" cy="8" r="3" fill="#444"/></svg>
<svg class="a" style="left:95px;top:167.9px" width="16" height="16" viewBox="0 0 16 16"><path d="M1 6 H9 V15 H1 Z" fill="#f0c838" stroke="#a88a20" stroke-width="0.7"/><rect x="4" y="1" width="4" height="6" fill="#fff" stroke="#333" stroke-width="0.8"/><path d="M4 1 V13" stroke="#2a3ad0" stroke-width="1"/><rect x="8.5" y="5.5" width="5" height="4" fill="#c01818"/><rect x="5" y="9.5" width="4" height="4" fill="#c01818"/><rect x="9" y="9.5" width="4" height="4" fill="#e8a040"/></svg>
<div class="a" style="left:112px;top:168.4px;font-size:12.5px;letter-spacing:0px;color:#2b2b2b;font-weight:normal;white-space:nowrap">Basic Frame</div>
<div class="a" style="left:218px;top:168.4px;font-size:12.5px;letter-spacing:0px;color:#2b2b2b;font-weight:normal;white-space:nowrap">3 bodies</div>
<div class="a" style="left:214px;top:185.95px;width:1px;height:20.55px;background:#eeeeee"></div>
<svg class="a" style="left:96px;top:188.5px" width="16" height="16" viewBox="0 0 16 16"><path d="M1 8 Q8 1.5 15 8 Q8 14.5 1 8Z" fill="#fff" stroke="#555" stroke-width="1.1"/><circle cx="8" cy="8" r="3" fill="#444"/></svg>
<svg class="a" style="left:110px;top:188.5px" width="16" height="16" viewBox="0 0 16 16"><path d="M2 11 L9 6 L15 10 L8 15 Z" fill="#888" stroke="#333" stroke-width="0.8"/><path d="M3 9 L8 5 L13 8 L8 12 Z" fill="#e8a060" stroke="#955" stroke-width="0.5"/><circle cx="6" cy="5" r="3.8" fill="#fff" stroke="#222" stroke-width="1.4"/><path d="M3.5 7.5 L8.5 2.5" stroke="#222" stroke-width="1.4"/></svg>
<div class="a" style="left:128px;top:189.0px;font-size:12.5px;letter-spacing:0px;color:#2b2b2b;font-weight:normal;white-space:nowrap">Body "Head ...</div>
<div class="a" style="left:218px;top:189.0px;font-size:12.5px;letter-spacing:0px;color:#2b2b2b;font-weight:normal;white-space:nowrap">Keep In</div>
<div class="a" style="left:214px;top:206.50px;width:1px;height:20.55px;background:#eeeeee"></div>
<svg class="a" style="left:96px;top:209.0px" width="16" height="16" viewBox="0 0 16 16"><path d="M1 8 Q8 1.5 15 8 Q8 14.5 1 8Z" fill="#fff" stroke="#555" stroke-width="1.1"/><circle cx="8" cy="8" r="3" fill="#444"/></svg>
<svg class="a" style="left:110px;top:209.0px" width="16" height="16" viewBox="0 0 16 16"><path d="M2 11 L9 6 L15 10 L8 15 Z" fill="#888" stroke="#333" stroke-width="0.8"/><path d="M3 9 L8 5 L13 8 L8 12 Z" fill="#e8a060" stroke="#955" stroke-width="0.5"/><circle cx="6" cy="5" r="3.8" fill="#fff" stroke="#222" stroke-width="1.4"/><path d="M3.5 7.5 L8.5 2.5" stroke="#222" stroke-width="1.4"/></svg>
<div class="a" style="left:128px;top:209.5px;font-size:12.5px;letter-spacing:0px;color:#2b2b2b;font-weight:normal;white-space:nowrap">Body "Seat T...</div>
<div class="a" style="left:218px;top:209.5px;font-size:12.5px;letter-spacing:0px;color:#2b2b2b;font-weight:normal;white-space:nowrap">Keep In</div>
<div class="a" style="left:214px;top:227.05px;width:1px;height:20.55px;background:#eeeeee"></div>
<svg class="a" style="left:96px;top:229.6px" width="16" height="16" viewBox="0 0 16 16"><path d="M1 8 Q8 1.5 15 8 Q8 14.5 1 8Z" fill="#fff" stroke="#555" stroke-width="1.1"/><circle cx="8" cy="8" r="3" fill="#444"/></svg>
<svg class="a" style="left:110px;top:229.6px" width="16" height="16" viewBox="0 0 16 16"><path d="M2 11 L9 6 L15 10 L8 15 Z" fill="#888" stroke="#333" stroke-width="0.8"/><path d="M3 9 L8 5 L13 8 L8 12 Z" fill="#e8a060" stroke="#955" stroke-width="0.5"/><circle cx="6" cy="5" r="3.8" fill="#fff" stroke="#222" stroke-width="1.4"/><path d="M3.5 7.5 L8.5 2.5" stroke="#222" stroke-width="1.4"/></svg>
<div class="a" style="left:128px;top:230.1px;font-size:12.5px;letter-spacing:0px;color:#2b2b2b;font-weight:normal;white-space:nowrap">Body "Crank ...</div>
<div class="a" style="left:218px;top:230.1px;font-size:12.5px;letter-spacing:0px;color:#2b2b2b;font-weight:normal;white-space:nowrap">Keep In</div>
<div class="a" style="left:214px;top:247.60px;width:1px;height:20.55px;background:#eeeeee"></div>
<div class="a" style="left:69px;top:253.6px;width:9px;height:9px;border:1px solid #d8d8d8;background:#fff"><div class="a" style="left:1.5px;top:3px;width:5px;height:1px;background:#555;opacity:1.0"></div></div>
<svg class="a" style="left:80px;top:250.1px" width="16" height="16" viewBox="0 0 16 16"><path d="M1 8 Q8 1.5 15 8 Q8 14.5 1 8Z" fill="#fff" stroke="#555" stroke-width="1.1"/><circle cx="8" cy="8" r="3" fill="#444"/></svg>
<svg class="a" style="left:95px;top:250.1px" width="16" height="16" viewBox="0 0 16 16"><path d="M1 6 H9 V15 H1 Z" fill="#f0c838" stroke="#a88a20" stroke-width="0.7"/><rect x="4" y="1" width="4" height="6" fill="#fff" stroke="#333" stroke-width="0.8"/><path d="M4 1 V13" stroke="#2a3ad0" stroke-width="1"/><rect x="8.5" y="5.5" width="5" height="4" fill="#c01818"/><rect x="5" y="9.5" width="4" height="4" fill="#c01818"/><rect x="9" y="9.5" width="4" height="4" fill="#e8a040"/></svg>
<div class="a" style="left:112px;top:250.6px;font-size:12.5px;letter-spacing:0px;color:#2b2b2b;font-weight:normal;white-space:nowrap">Rear Tire</div>
<div class="a" style="left:218px;top:250.6px;font-size:12.5px;letter-spacing:0px;color:#2b2b2b;font-weight:normal;white-space:nowrap">1 body</div>
<div class="a" style="left:214px;top:268.15px;width:1px;height:20.55px;background:#eeeeee"></div>
<svg class="a" style="left:96px;top:270.7px" width="16" height="16" viewBox="0 0 16 16"><path d="M1 8 Q8 1.5 15 8 Q8 14.5 1 8Z" fill="#fff" stroke="#555" stroke-width="1.1"/><circle cx="8" cy="8" r="3" fill="#444"/></svg>
<svg class="a" style="left:110px;top:270.7px" width="16" height="16" viewBox="0 0 16 16"><path d="M2 11 L9 6 L15 10 L8 15 Z" fill="#888" stroke="#333" stroke-width="0.8"/><path d="M3 9 L8 5 L13 8 L8 12 Z" fill="#e8a060" stroke="#955" stroke-width="0.5"/><circle cx="6" cy="5" r="3.8" fill="#fff" stroke="#222" stroke-width="1.4"/><path d="M3.5 7.5 L8.5 2.5" stroke="#222" stroke-width="1.4"/></svg>
<div class="a" style="left:128px;top:271.2px;font-size:12.5px;letter-spacing:0px;color:#2b2b2b;font-weight:normal;white-space:nowrap">Body "Rear T...</div>
<div class="a" style="left:218px;top:271.2px;font-size:12.5px;letter-spacing:0px;color:#2b2b2b;font-weight:normal;white-space:nowrap">Keep Ou</div>
<div class="a" style="left:214px;top:288.70px;width:1px;height:20.55px;background:#eeeeee"></div>
<div class="a" style="left:69px;top:294.7px;width:9px;height:9px;border:1px solid #d8d8d8;background:#fff"><div class="a" style="left:1.5px;top:3px;width:5px;height:1px;background:#555;opacity:1.0"></div></div>
<svg class="a" style="left:80px;top:291.2px" width="16" height="16" viewBox="0 0 16 16"><path d="M1 8 Q8 1.5 15 8 Q8 14.5 1 8Z" fill="#fff" stroke="#555" stroke-width="1.1"/><circle cx="8" cy="8" r="3" fill="#444"/></svg>
<svg class="a" style="left:95px;top:291.2px" width="16" height="16" viewBox="0 0 16 16"><path d="M1 6 H9 V15 H1 Z" fill="#f0c838" stroke="#a88a20" stroke-width="0.7"/><rect x="4" y="1" width="4" height="6" fill="#fff" stroke="#333" stroke-width="0.8"/><path d="M4 1 V13" stroke="#2a3ad0" stroke-width="1"/><rect x="8.5" y="5.5" width="5" height="4" fill="#c01818"/><rect x="5" y="9.5" width="4" height="4" fill="#c01818"/><rect x="9" y="9.5" width="4" height="4" fill="#e8a040"/></svg>
<div class="a" style="left:112px;top:291.7px;font-size:12.5px;letter-spacing:0px;color:#2b2b2b;font-weight:normal;white-space:nowrap">Rear Hub Casse...</div>
<div class="a" style="left:218px;top:291.7px;font-size:12.5px;letter-spacing:0px;color:#2b2b2b;font-weight:normal;white-space:nowrap">2 bodies</div>
<div class="a" style="left:214px;top:309.25px;width:1px;height:20.55px;background:#eeeeee"></div>
<svg class="a" style="left:96px;top:311.8px" width="16" height="16" viewBox="0 0 16 16"><path d="M1 8 Q8 1.5 15 8 Q8 14.5 1 8Z" fill="#fff" stroke="#555" stroke-width="1.1"/><circle cx="8" cy="8" r="3" fill="#444"/></svg>
<svg class="a" style="left:110px;top:311.8px" width="16" height="16" viewBox="0 0 16 16"><path d="M2 11 L9 6 L15 10 L8 15 Z" fill="#888" stroke="#333" stroke-width="0.8"/><path d="M3 9 L8 5 L13 8 L8 12 Z" fill="#e8a060" stroke="#955" stroke-width="0.5"/><circle cx="6" cy="5" r="3.8" fill="#fff" stroke="#222" stroke-width="1.4"/><path d="M3.5 7.5 L8.5 2.5" stroke="#222" stroke-width="1.4"/></svg>
<div class="a" style="left:128px;top:312.2px;font-size:12.5px;letter-spacing:0px;color:#2b2b2b;font-weight:normal;white-space:nowrap">Body "Rear ...</div>
<div class="a" style="left:218px;top:312.2px;font-size:12.5px;letter-spacing:0px;color:#2b2b2b;font-weight:normal;white-space:nowrap">Keep Ou</div>
<div class="a" style="left:214px;top:329.80px;width:1px;height:20.55px;background:#eeeeee"></div>
<svg class="a" style="left:96px;top:332.3px" width="16" height="16" viewBox="0 0 16 16"><path d="M1 8 Q8 1.5 15 8 Q8 14.5 1 8Z" fill="#fff" stroke="#555" stroke-width="1.1"/><circle cx="8" cy="8" r="3" fill="#444"/></svg>
<svg class="a" style="left:110px;top:332.3px" width="16" height="16" viewBox="0 0 16 16"><path d="M2 11 L9 6 L15 10 L8 15 Z" fill="#888" stroke="#333" stroke-width="0.8"/><path d="M3 9 L8 5 L13 8 L8 12 Z" fill="#e8a060" stroke="#955" stroke-width="0.5"/><circle cx="6" cy="5" r="3.8" fill="#fff" stroke="#222" stroke-width="1.4"/><path d="M3.5 7.5 L8.5 2.5" stroke="#222" stroke-width="1.4"/></svg>
<div class="a" style="left:128px;top:332.8px;font-size:12.5px;letter-spacing:0px;color:#2b2b2b;font-weight:normal;white-space:nowrap">Body "Casset...</div>
<div class="a" style="left:218px;top:332.8px;font-size:12.5px;letter-spacing:0px;color:#2b2b2b;font-weight:normal;white-space:nowrap">Keep Ou</div>
<div class="a" style="left:214px;top:350.35px;width:1px;height:20.55px;background:#eeeeee"></div>
<svg class="a" style="left:80px;top:352.9px" width="16" height="16" viewBox="0 0 16 16"><path d="M1 8 Q8 1.5 15 8 Q8 14.5 1 8Z" fill="#fff" stroke="#555" stroke-width="1.1"/><circle cx="8" cy="8" r="3" fill="#444"/></svg>
<svg class="a" style="left:94px;top:352.9px" width="16" height="16" viewBox="0 0 16 16"><path d="M2 11 L9 6 L15 10 L8 15 Z" fill="#888" stroke="#333" stroke-width="0.8"/><path d="M3 9 L8 5 L13 8 L8 12 Z" fill="#e8a060" stroke="#955" stroke-width="0.5"/><circle cx="6" cy="5" r="3.8" fill="#fff" stroke="#222" stroke-width="1.4"/><path d="M3.5 7.5 L8.5 2.5" stroke="#222" stroke-width="1.4"/></svg>
<div class="a" style="left:112px;top:353.4px;font-size:12.5px;letter-spacing:0px;color:#2b2b2b;font-weight:normal;white-space:nowrap">Body "Rear Axle...</div>
<div class="a" style="left:218px;top:353.4px;font-size:12.5px;letter-spacing:0px;color:#2b2b2b;font-weight:normal;white-space:nowrap">Shell</div>
<div class="a" style="left:214px;top:370.90px;width:1px;height:20.55px;background:#eeeeee"></div>
<div class="a" style="left:69px;top:376.9px;width:9px;height:9px;border:1px solid #d8d8d8;background:#fff"><div class="a" style="left:1.5px;top:3px;width:5px;height:1px;background:#555;opacity:0.55"></div></div>
<svg class="a" style="left:80px;top:373.4px;opacity:0.55" width="16" height="16" viewBox="0 0 16 16"><path d="M1 8 Q8 1.5 15 8 Q8 14.5 1 8Z" fill="none" stroke="#777" stroke-width="1"/><circle cx="8" cy="8" r="2.8" fill="none" stroke="#777" stroke-width="0.9"/><path d="M2 15 L14 1" stroke="#666" stroke-width="1"/></svg>
<svg class="a" style="left:95px;top:373.4px;opacity:0.55" width="16" height="16" viewBox="0 0 16 16"><path d="M1 6 H9 V15 H1 Z" fill="#f0c838" stroke="#a88a20" stroke-width="0.7"/><rect x="4" y="1" width="4" height="6" fill="#fff" stroke="#333" stroke-width="0.8"/><path d="M4 1 V13" stroke="#2a3ad0" stroke-width="1"/><rect x="8.5" y="5.5" width="5" height="4" fill="#c01818"/><rect x="5" y="9.5" width="4" height="4" fill="#c01818"/><rect x="9" y="9.5" width="4" height="4" fill="#e8a040"/></svg>
<div class="a" style="left:112px;top:373.9px;font-size:12.5px;letter-spacing:0px;color:#a8a8a8;font-weight:normal;white-space:nowrap">Keep Out</div>
<div class="a" style="left:218px;top:373.9px;font-size:12.5px;letter-spacing:0px;color:#a8a8a8;font-weight:normal;white-space:nowrap">2 bodies</div>
<div class="a" style="left:214px;top:391.45px;width:1px;height:20.55px;background:#eeeeee"></div>
<svg class="a" style="left:96px;top:394.0px;opacity:0.55" width="16" height="16" viewBox="0 0 16 16"><path d="M1 8 Q8 1.5 15 8 Q8 14.5 1 8Z" fill="none" stroke="#777" stroke-width="1"/><circle cx="8" cy="8" r="2.8" fill="none" stroke="#777" stroke-width="0.9"/><path d="M2 15 L14 1" stroke="#666" stroke-width="1"/></svg>
<svg class="a" style="left:110px;top:394.0px;opacity:0.55" width="16" height="16" viewBox="0 0 16 16"><path d="M1.5 6 L8 2.5 L14.5 6 L14.5 12 L11 14 L11 9 L8 7.5 L5 9 L5 14 L1.5 12 Z" fill="#d8e4ea" stroke="#667" stroke-width="0.9"/><path d="M1.5 6 L5 8 L8 6.5 L11 8 L14.5 6" fill="none" stroke="#4aa8d8" stroke-width="1.5"/></svg>
<div class="a" style="left:128px;top:394.5px;font-size:12.5px;letter-spacing:0px;color:#a8a8a8;font-weight:normal;white-space:nowrap">Extrude (65)</div>
<div class="a" style="left:218px;top:394.5px;font-size:12.5px;letter-spacing:0px;color:#a8a8a8;font-weight:normal;white-space:nowrap">Keep Ou</div>
<div class="a" style="left:214px;top:412.00px;width:1px;height:20.55px;background:#eeeeee"></div>
<svg class="a" style="left:96px;top:414.5px;opacity:0.55" width="16" height="16" viewBox="0 0 16 16"><path d="M1 8 Q8 1.5 15 8 Q8 14.5 1 8Z" fill="none" stroke="#777" stroke-width="1"/><circle cx="8" cy="8" r="2.8" fill="none" stroke="#777" stroke-width="0.9"/><path d="M2 15 L14 1" stroke="#666" stroke-width="1"/></svg>
<svg class="a" style="left:110px;top:414.5px;opacity:0.55" width="16" height="16" viewBox="0 0 16 16"><path d="M1.5 6 L8 2.5 L14.5 6 L14.5 12 L11 14 L11 9 L8 7.5 L5 9 L5 14 L1.5 12 Z" fill="#d8e4ea" stroke="#667" stroke-width="0.9"/><path d="M1.5 6 L5 8 L8 6.5 L11 8 L14.5 6" fill="none" stroke="#4aa8d8" stroke-width="1.5"/></svg>
<div class="a" style="left:128px;top:415.0px;font-size:12.5px;letter-spacing:0px;color:#a8a8a8;font-weight:normal;white-space:nowrap">Extrude (65)</div>
<div class="a" style="left:218px;top:415.0px;font-size:12.5px;letter-spacing:0px;color:#a8a8a8;font-weight:normal;white-space:nowrap">Keep Ou</div>
<div class="a" style="left:214px;top:432.55px;width:1px;height:20.55px;background:#eeeeee"></div>
<div class="a" style="left:53px;top:438.5px;width:9px;height:9px;border:1px solid #d8d8d8;background:#fff"><div class="a" style="left:1.5px;top:3px;width:5px;height:1px;background:#555;opacity:1.0"></div></div>
<svg class="a" style="left:64px;top:435.0px" width="16" height="16" viewBox="0 0 16 16"><path d="M1.5 3.5H6L7.5 5H13.5V13.5H1.5Z" fill="#fff" stroke="#444" stroke-width="1"/><path d="M1.5 13.5L3.5 7.5H15L13.5 13.5" fill="#fff" stroke="#444" stroke-width="1"/></svg>
<div class="a" style="left:82px;top:435.5px;font-size:12.5px;letter-spacing:0px;color:#2b2b2b;font-weight:normal;white-space:nowrap">Shape Constraints</div>
<div class="a" style="left:214px;top:453.10px;width:1px;height:20.55px;background:#eeeeee"></div>
<svg class="a" style="left:80px;top:455.6px" width="16" height="16" viewBox="0 0 16 16"><path d="M3 14 L9 2" stroke="#f0c030" stroke-width="2"/><path d="M2 8 Q4 6 6 9 L4 13 Z" fill="#3a6ac8"/><circle cx="10" cy="9" r="4.5" fill="#f03a10"/><rect x="8" y="7" width="4" height="4" fill="#f8e020"/></svg>
<div class="a" style="left:98px;top:456.1px;font-size:12.5px;letter-spacing:0px;color:#2b2b2b;font-weight:normal;white-space:nowrap">Planar Symmetry 01</div>
<div class="a" style="left:218px;top:456.1px;font-size:12.5px;letter-spacing:0px;color:#2b2b2b;font-weight:normal;white-space:nowrap">Whole M</div>
<div class="a" style="left:214px;top:473.65px;width:1px;height:20.55px;background:#eeeeee"></div>
<div class="a" style="left:53px;top:479.7px;width:9px;height:9px;border:1px solid #d8d8d8;background:#fff"><div class="a" style="left:1.5px;top:3px;width:5px;height:1px;background:#555;opacity:1.0"></div></div>
<svg class="a" style="left:64px;top:476.2px" width="16" height="16" viewBox="0 0 16 16"><path d="M1.5 8.5 L5 12.5 L12 2.5" fill="none" stroke="#4ac84a" stroke-width="1.8"/></svg>
<svg class="a" style="left:76px;top:476.2px" width="16" height="16" viewBox="0 0 16 16"><path d="M1.5 3.5H6L7.5 5H13.5V13.5H1.5Z" fill="#fff" stroke="#444" stroke-width="1"/><path d="M1.5 13.5L3.5 7.5H15L13.5 13.5" fill="#fff" stroke="#444" stroke-width="1"/></svg>
<div class="a" style="left:95px;top:476.7px;font-size:12.5px;letter-spacing:0px;color:#2b2b2b;font-weight:normal;white-space:nowrap">Optimization Cons...</div>
<div class="a" style="left:214px;top:494.20px;width:1px;height:20.55px;background:#eeeeee"></div>
<svg class="a" style="left:80px;top:496.7px" width="16" height="16" viewBox="0 0 16 16"><path d="M4 5 L12 5 L15 13 L1 13 Z" fill="#fff" stroke="#444" stroke-width="1"/><circle cx="8" cy="3.5" r="2" fill="#fff" stroke="#444" stroke-width="0.9"/><path d="M8 5 L5 13 M8 5 L11 13" stroke="#666" stroke-width="0.6"/></svg>
<div class="a" style="left:98px;top:497.2px;font-size:12.5px;letter-spacing:0px;color:#2b2b2b;font-weight:normal;white-space:nowrap">Max Mass Limit 01</div>
<div class="a" style="left:218px;top:497.2px;font-size:12.5px;letter-spacing:0px;color:#2b2b2b;font-weight:normal;white-space:nowrap">3.5 kg</div>
<div class="a" style="left:214px;top:514.75px;width:1px;height:20.55px;background:#eeeeee"></div>
<div class="a" style="left:20px;top:520.8px;width:9px;height:9px;border:1px solid #d8d8d8;background:#fff"><div class="a" style="left:1.5px;top:3px;width:5px;height:1px;background:#555;opacity:1.0"></div></div>
<svg class="a" style="left:31px;top:517.2px" width="16" height="16" viewBox="0 0 16 16"><path d="M1.5 3.5H6L7.5 5H13.5V13.5H1.5Z" fill="#fff" stroke="#444" stroke-width="1"/><path d="M1.5 13.5L3.5 7.5H15L13.5 13.5" fill="#fff" stroke="#444" stroke-width="1"/></svg>
<div class="a" style="left:49px;top:517.8px;font-size:12.5px;letter-spacing:0px;color:#2b2b2b;font-weight:normal;white-space:nowrap">Scenery Bodies</div>
<div class="a" style="left:214px;top:535.30px;width:1px;height:20.55px;background:#eeeeee"></div>
<div class="a" style="left:36px;top:541.3px;width:9px;height:9px;border:1px solid #d8d8d8;background:#fff"><div class="a" style="left:1.5px;top:3px;width:5px;height:1px;background:#555;opacity:1.0"></div></div>
<svg class="a" style="left:47px;top:537.8px" width="16" height="16" viewBox="0 0 16 16"><path d="M1 8 Q8 1.5 15 8 Q8 14.5 1 8Z" fill="#fff" stroke="#555" stroke-width="1.1"/><circle cx="8" cy="8" r="3" fill="#444"/></svg>
<svg class="a" style="left:61px;top:537.8px" width="16" height="16" viewBox="0 0 16 16"><path d="M1.5 6 L8 2.5 L14.5 6 L14.5 12 L11 14 L11 9 L8 7.5 L5 9 L5 14 L1.5 12 Z" fill="#d8e4ea" stroke="#667" stroke-width="0.9"/><path d="M1.5 6 L5 8 L8 6.5 L11 8 L14.5 6" fill="none" stroke="#4aa8d8" stroke-width="1.5"/></svg>
<div class="a" style="left:79px;top:538.3px;font-size:12.5px;letter-spacing:0px;color:#2b2b2b;font-weight:normal;white-space:nowrap">Seat Post</div>
<div class="a" style="left:218px;top:538.3px;font-size:12.5px;letter-spacing:0px;color:#2b2b2b;font-weight:normal;white-space:nowrap">Extrude</div>
<div class="a" style="left:214px;top:555.85px;width:1px;height:20.55px;background:#eeeeee"></div>
<svg class="a" style="left:64px;top:558.4px" width="16" height="16" viewBox="0 0 16 16"><circle cx="6.5" cy="6.5" r="4.5" fill="none" stroke="#8a5ac8" stroke-width="1.8"/><path d="M7 9 L11 7 L15 9 L15 13.5 L11 15.5 L7 13.5 Z" fill="#f3c430" stroke="#9a7a10" stroke-width="0.7"/></svg>
<div class="a" style="left:82px;top:558.9px;font-size:12.5px;letter-spacing:0px;color:#2b2b2b;font-weight:normal;white-space:nowrap">Material</div>
<div class="a" style="left:218px;top:558.9px;font-size:12.5px;letter-spacing:0px;color:#2b2b2b;font-weight:normal;white-space:nowrap">Aluminu</div>
<div class="a" style="left:214px;top:576.40px;width:1px;height:20.55px;background:#eeeeee"></div>
<div class="a" style="left:36px;top:582.4px;width:9px;height:9px;border:1px solid #d8d8d8;background:#fff"><div class="a" style="left:1.5px;top:3px;width:5px;height:1px;background:#555;opacity:1.0"></div></div>
<svg class="a" style="left:47px;top:578.9px" width="16" height="16" viewBox="0 0 16 16"><path d="M1 8 Q8 1.5 15 8 Q8 14.5 1 8Z" fill="#fff" stroke="#555" stroke-width="1.1"/><circle cx="8" cy="8" r="3" fill="#444"/></svg>
<svg class="a" style="left:61px;top:578.9px" width="16" height="16" viewBox="0 0 16 16"><path d="M2 11 L9 6 L15 10 L8 15 Z" fill="#888" stroke="#333" stroke-width="0.8"/><path d="M3 9 L8 5 L13 8 L8 12 Z" fill="#e8a060" stroke="#955" stroke-width="0.5"/><circle cx="6" cy="5" r="3.8" fill="#fff" stroke="#222" stroke-width="1.4"/><path d="M3.5 7.5 L8.5 2.5" stroke="#222" stroke-width="1.4"/></svg>
<div class="a" style="left:79px;top:579.4px;font-size:12.5px;letter-spacing:0px;color:#2b2b2b;font-weight:normal;white-space:nowrap">Crank Shaft</div>
<div class="a" style="left:218px;top:579.4px;font-size:12.5px;letter-spacing:0px;color:#2b2b2b;font-weight:normal;white-space:nowrap">Body "Cr</div>
<div class="a" style="left:214px;top:596.95px;width:1px;height:20.55px;background:#eeeeee"></div>
<svg class="a" style="left:64px;top:599.5px" width="16" height="16" viewBox="0 0 16 16"><circle cx="6.5" cy="6.5" r="4.5" fill="none" stroke="#8a5ac8" stroke-width="1.8"/><path d="M7 9 L11 7 L15 9 L15 13.5 L11 15.5 L7 13.5 Z" fill="#f3c430" stroke="#9a7a10" stroke-width="0.7"/></svg>
<div class="a" style="left:82px;top:600.0px;font-size:12.5px;letter-spacing:0px;color:#2b2b2b;font-weight:normal;white-space:nowrap">Material</div>
<div class="a" style="left:218px;top:600.0px;font-size:12.5px;letter-spacing:0px;color:#2b2b2b;font-weight:normal;white-space:nowrap">Steel</div>
<div class="a" style="left:214px;top:617.50px;width:1px;height:20.55px;background:#eeeeee"></div>
<div class="a" style="left:36px;top:623.5px;width:9px;height:9px;border:1px solid #d8d8d8;background:#fff"><div class="a" style="left:1.5px;top:3px;width:5px;height:1px;background:#555;opacity:1.0"></div></div>
<svg class="a" style="left:47px;top:620.0px" width="16" height="16" viewBox="0 0 16 16"><path d="M1 8 Q8 1.5 15 8 Q8 14.5 1 8Z" fill="#fff" stroke="#555" stroke-width="1.1"/><circle cx="8" cy="8" r="3" fill="#444"/></svg>
<svg class="a" style="left:61px;top:620.0px" width="16" height="16" viewBox="0 0 16 16"><path d="M2 11 L9 6 L15 10 L8 15 Z" fill="#888" stroke="#333" stroke-width="0.8"/><path d="M3 9 L8 5 L13 8 L8 12 Z" fill="#e8a060" stroke="#955" stroke-width="0.5"/><circle cx="6" cy="5" r="3.8" fill="#fff" stroke="#222" stroke-width="1.4"/><path d="M3.5 7.5 L8.5 2.5" stroke="#222" stroke-width="1.4"/></svg>
<div class="a" style="left:79px;top:620.5px;font-size:12.5px;letter-spacing:0px;color:#2b2b2b;font-weight:normal;white-space:nowrap">Scenery Body 01</div>
<div class="a" style="left:218px;top:620.5px;font-size:12.5px;letter-spacing:0px;color:#2b2b2b;font-weight:normal;white-space:nowrap">Body "H</div>
<div class="a" style="left:214px;top:638.05px;width:1px;height:20.55px;background:#eeeeee"></div>
<svg class="a" style="left:64px;top:640.6px" width="16" height="16" viewBox="0 0 16 16"><circle cx="6.5" cy="6.5" r="4.5" fill="none" stroke="#8a5ac8" stroke-width="1.8"/><path d="M7 9 L11 7 L15 9 L15 13.5 L11 15.5 L7 13.5 Z" fill="#f3c430" stroke="#9a7a10" stroke-width="0.7"/></svg>
<div class="a" style="left:82px;top:641.1px;font-size:12.5px;letter-spacing:0px;color:#2b2b2b;font-weight:normal;white-space:nowrap">Material</div>
<div class="a" style="left:218px;top:641.1px;font-size:12.5px;letter-spacing:0px;color:#2b2b2b;font-weight:normal;white-space:nowrap">Aluminu</div>
<div class="a" style="left:45px;top:1px;width:221px;height:20px;border:1px dotted #333"></div>
</div>
<div class="a" style="left:304px;top:223px;width:18px;height:654px;background:#f0f0f0"></div>
<div class="a" style="left:305px;top:242px;width:16px;height:285px;background:#c6c6c6"></div>
<svg class="a" style="left:304px;top:223px" width="18" height="654" viewBox="0 0 18 654"><path d="M4.5 13.5 L9 9 L13.5 13.5" fill="none" stroke="#444" stroke-width="1.2"/><path d="M4.5 640 L9 644.5 L13.5 640" fill="none" stroke="#444" stroke-width="1.2"/></svg>
<div class="a" style="left:38px;top:877px;width:284px;height:17px;background:#f0f0f0"></div>
<div class="a" style="left:57px;top:878px;width:140px;height:15px;background:#c6c6c6"></div>
<svg class="a" style="left:38px;top:877px" width="284" height="17" viewBox="0 0 284 17"><path d="M10.5 4 L6 8.5 L10.5 13" fill="none" stroke="#444" stroke-width="1.2"/><path d="M253.5 4 L258 8.5 L253.5 13" fill="none" stroke="#444" stroke-width="1.2"/></svg>
<div class="a" style="left:33px;top:899px;width:294px;height:1px;background:#d8d8d8"></div><div id="vp" class="a"></div>
<div class="a" style="left:472px;top:171px;width:234px;height:24px;background:#06628d"></div>
<div class="a" style="left:336px;top:194px;width:1308px;height:2px;background:#1a5f7e"></div><div class="a" style="left:1643px;top:196px;width:1px;height:708px;background:#d6d6d8"></div>
<div class="a" style="left:358px;top:176.5px;font-size:12.4px;color:#333;white-space:nowrap">Discovery Center</div>
<div class="a" style="left:494px;top:176.5px;font-size:12.6px;color:#fff;white-space:nowrap">new_bike_4a remote force.prt(!)</div>
<svg class="a" style="left:336px;top:171px" width="400" height="25" viewBox="336 171 400 25">
  <g fill="none" stroke="#555" stroke-width="1"><circle cx="346" cy="186" r="4.5"/><path d="M346 186 L349 183"/><path d="M350 178 H354 V190 H350 M353 178 V190"/></g>
  <rect x="341" y="176" width="6" height="5" rx="2" fill="#d02040"/>
  <path d="M478.3 179.2 L483 180.2 L488.7 176.3 L485 181.8 L488.5 184.5 L483.8 184 L481.5 188.4 L481.2 183.5 Z" fill="#f3b82a" stroke="#5a4a20" stroke-width="0.5"/>
  <g fill="none" stroke="#fff" stroke-width="1.2"><path d="M679.5 178.5 H685.5 L687 180 V187.5 H679.5 Z"/><path d="M682 183 L686 183 M684 181 L686 183 L684 185"/></g>
  <path d="M693 179 L700 186 M700 179 L693 186" stroke="#fff" stroke-width="1.4"/>
</svg>
<svg class="a" style="left:336px;top:196px" width="1308" height="708" viewBox="336 196 1308 708">
  <defs>
    <linearGradient id="tire" x1="0" y1="0.5" x2="1" y2="0.5"><stop offset="0" stop-color="#8e969a"/><stop offset="0.5" stop-color="#a9b2b6"/><stop offset="1" stop-color="#b7c0c4"/></linearGradient><linearGradient id="hl" x1="0" y1="0.5" x2="1" y2="0.5"><stop offset="0.45" stop-color="#dfe5e7" stop-opacity="0"/><stop offset="0.8" stop-color="#dfe5e7" stop-opacity="0.9"/><stop offset="1" stop-color="#dfe5e7" stop-opacity="0.7"/></linearGradient>
    <linearGradient id="tube" x1="0" y1="0" x2="1" y2="0"><stop offset="0" stop-color="#a2abaf"/><stop offset="0.4" stop-color="#ccd3d6"/><stop offset="0.75" stop-color="#b8c0c4"/><stop offset="1" stop-color="#9ea7ab"/></linearGradient><linearGradient id="tube2" x1="0" y1="0" x2="0" y2="1"><stop offset="0" stop-color="#c6ced1"/><stop offset="0.4" stop-color="#b0b8bc"/><stop offset="1" stop-color="#7d8589"/></linearGradient>
  </defs>
  <!-- rear wheel -->
  <ellipse cx="707.4" cy="554.8" rx="133" ry="167" fill="url(#tire)" transform="rotate(-29.2 707.4 554.8)"/>
  <ellipse cx="706" cy="555.3" rx="129.5" ry="163" fill="none" stroke="url(#hl)" stroke-width="3" transform="rotate(-28.5 706 555.3)"/>
  <ellipse cx="702.3" cy="556.6" rx="125.5" ry="156.4" fill="#858b91" stroke="#2e3236" stroke-width="0.9" transform="rotate(-27.1 702.3 556.6)"/>
  <!-- front wheel -->
  <ellipse cx="1135.6" cy="687.3" rx="133.7" ry="166.7" fill="url(#tire)" transform="rotate(-28.2 1135.6 687.3)"/>
  <ellipse cx="1134" cy="687.8" rx="130" ry="162.5" fill="none" stroke="url(#hl)" stroke-width="3" transform="rotate(-27.5 1134 687.8)"/>
  <ellipse cx="1131" cy="689.3" rx="126.3" ry="156.8" fill="#858b91" stroke="#2e3236" stroke-width="0.9" transform="rotate(-26.6 1131 689.3)"/>
<g transform="translate(828.3 331.5) rotate(-9.60)"><rect x="-7" y="0" width="14" height="203.3" fill="url(#tube)"/><path d="M-7 0V203.3M7 0V203.3" stroke="#7d868b" stroke-width="0.6"/><ellipse cx="0" cy="0" rx="7" ry="3.1" fill="#b9c1c5" stroke="#777" stroke-width="0.6"/></g>
<g transform="translate(828.3 331.5) rotate(-9.60)"><path d="M-6.5 90.5 Q0 93.7 6.5 90.5" fill="none" stroke="#555" stroke-width="0.9"/></g>
<path d="M822.5 331 L839 327 L843 314 L827 317 Z" fill="#b96c3c"/><path d="M827 317 L843 314 L848 300 L845 299 L842 301 L839 300 L834 302 Z" fill="#e08a52"/>
<text x="823" y="335.5" font-family="Liberation Sans" font-size="11.3px" fill="#c98f78"><tspan fill="#e8ebec">Cli</tspan>mb on Saddle</text>
<g transform="translate(849.2 434.2) scale(1.0)"><path d="M-23 7.5 L-9 -2.5 L-3 -2.5 L-1 5 L-12 7.8 Z" fill="#551a50"/><ellipse cx="-8" cy="0" rx="3.2" ry="3" fill="#3e0f3b"/><path d="M15 -5.5 L4 -5.5 L2 3 L8 4 L9 -1.5 Z" fill="#551a50"/><path d="M-5 0 L4 -6 L8 -3.5 L-1 3 Z" fill="#f4f4f4" stroke="#d0d0d0" stroke-width="0.5"/></g>
<g transform="translate(850.8 462.1) scale(1.0)"><path d="M-23 7.5 L-9 -2.5 L-3 -2.5 L-1 5 L-12 7.8 Z" fill="#551a50"/><ellipse cx="-8" cy="0" rx="3.2" ry="3" fill="#3e0f3b"/><path d="M15 -5.5 L4 -5.5 L2 3 L8 4 L9 -1.5 Z" fill="#551a50"/><path d="M-5 0 L4 -6 L8 -3.5 L-1 3 Z" fill="#f4f4f4" stroke="#d0d0d0" stroke-width="0.5"/></g>
<g transform="translate(855.8 490.0) scale(1.0)"><path d="M-23 7.5 L-9 -2.5 L-3 -2.5 L-1 5 L-12 7.8 Z" fill="#551a50"/><ellipse cx="-8" cy="0" rx="3.2" ry="3" fill="#3e0f3b"/><path d="M15 -5.5 L4 -5.5 L2 3 L8 4 L9 -1.5 Z" fill="#551a50"/><path d="M-5 0 L4 -6 L8 -3.5 L-1 3 Z" fill="#f4f4f4" stroke="#d0d0d0" stroke-width="0.5"/></g>
<g transform="translate(860.5 517.2) scale(1.0)"><path d="M-23 7.5 L-9 -2.5 L-3 -2.5 L-1 5 L-12 7.8 Z" fill="#551a50"/><ellipse cx="-8" cy="0" rx="3.2" ry="3" fill="#3e0f3b"/><path d="M15 -5.5 L4 -5.5 L2 3 L8 4 L9 -1.5 Z" fill="#551a50"/><path d="M-5 0 L4 -6 L8 -3.5 L-1 3 Z" fill="#f4f4f4" stroke="#d0d0d0" stroke-width="0.5"/></g>
<text x="864" y="467" font-family="Liberation Sans" font-size="11.3px" fill="#333">Seat Tube</text>
<g transform="translate(1043.4 362.0) rotate(-12.23)"><rect x="-7" y="0" width="14" height="170.9" fill="url(#tube)"/><path d="M-7 0V170.9M7 0V170.9" stroke="#7d868b" stroke-width="0.6"/><ellipse cx="0" cy="0" rx="7" ry="3.1" fill="#b9c1c5" stroke="#777" stroke-width="0.6"/></g>
<g transform="translate(1043.4 362.0) rotate(-12.23)"><path d="M-6.5 76.9 Q0 80.1 6.5 76.9" fill="none" stroke="#555" stroke-width="0.9"/></g>
<g transform="translate(1043.4 362.0) rotate(-12.23)"><path d="M-6.5 140.1 Q0 143.4 6.5 140.1" fill="none" stroke="#555" stroke-width="0.9"/></g>
<path d="M1073 530 L1087 527 L1093 564 L1080 566 Z" fill="#dfe2e4" opacity="0.85"/><path d="M1078 531V564M1082 530V564M1086 529V564" stroke="#c3c7ca" stroke-width="0.7"/><path d="M1075 528 L1077 537 M1078 528 L1080 537 M1081 527 L1083 536 M1084 527 L1086 535" stroke="#d27a3a" stroke-width="1.3"/>
<text x="1075" y="519.5" font-family="Liberation Sans" font-size="11.3px" fill="#c98f78"><tspan fill="#e6e9ea">R</tspan>oad Bump Front</text>
<g transform="translate(1044.0 372.0) rotate(-97.85)"><rect x="-5" y="0" width="10" height="29.3" fill="url(#tube)"/><path d="M-5 0V29.3M5 0V29.3" stroke="#7d868b" stroke-width="0.6"/></g>
<g transform="translate(1017.3 402.3) rotate(-117.99)"><rect x="-6" y="0" width="12" height="66.5" fill="url(#tube)"/><path d="M-6 0V66.5M6 0V66.5" stroke="#7d868b" stroke-width="0.6"/></g>
<g transform="translate(1078.3 371.1) rotate(-121.03)"><rect x="-6" y="0" width="12" height="60.3" fill="url(#tube)"/><path d="M-6 0V60.3M6 0V60.3" stroke="#7d868b" stroke-width="0.6"/></g>
<ellipse cx="1017.3" cy="402.3" rx="4" ry="6" transform="rotate(-28 1017.3 402.3)" fill="#aab2b6" stroke="#777" stroke-width="0.6"/>
<ellipse cx="1077" cy="371" rx="3.5" ry="6.5" transform="rotate(-28 1077 371)" fill="#b8c0c4" stroke="#555" stroke-width="0.8"/>
<ellipse cx="1130" cy="340" rx="3" ry="6" transform="rotate(-28 1130 340)" fill="#b8c0c4" stroke="#777" stroke-width="0.6"/>
<g transform="translate(1061.8 441.2) scale(0.88)"><path d="M-23 7.5 L-9 -2.5 L-3 -2.5 L-1 5 L-12 7.8 Z" fill="#551a50"/><ellipse cx="-8" cy="0" rx="3.2" ry="3" fill="#3e0f3b"/><path d="M15 -5.5 L4 -5.5 L2 3 L8 4 L9 -1.5 Z" fill="#551a50"/><path d="M-5 0 L4 -6 L8 -3.5 L-1 3 Z" fill="#f4f4f4" stroke="#d0d0d0" stroke-width="0.5"/></g>
<circle cx="1068.8" cy="440.7" r="3.4" fill="#3e0f3b"/>
<g transform="translate(1065.8 456.5) scale(0.88)"><path d="M-23 7.5 L-9 -2.5 L-3 -2.5 L-1 5 L-12 7.8 Z" fill="#551a50"/><ellipse cx="-8" cy="0" rx="3.2" ry="3" fill="#3e0f3b"/><path d="M15 -5.5 L4 -5.5 L2 3 L8 4 L9 -1.5 Z" fill="#551a50"/><path d="M-5 0 L4 -6 L8 -3.5 L-1 3 Z" fill="#f4f4f4" stroke="#d0d0d0" stroke-width="0.5"/></g>
<circle cx="1072.8" cy="456.0" r="3.4" fill="#3e0f3b"/>
<g transform="translate(1069.8 472.4) scale(0.88)"><path d="M-23 7.5 L-9 -2.5 L-3 -2.5 L-1 5 L-12 7.8 Z" fill="#551a50"/><ellipse cx="-8" cy="0" rx="3.2" ry="3" fill="#3e0f3b"/><path d="M15 -5.5 L4 -5.5 L2 3 L8 4 L9 -1.5 Z" fill="#551a50"/><path d="M-5 0 L4 -6 L8 -3.5 L-1 3 Z" fill="#f4f4f4" stroke="#d0d0d0" stroke-width="0.5"/></g>
<circle cx="1076.8" cy="471.9" r="3.4" fill="#3e0f3b"/>
<g transform="translate(1073.8 488.3) scale(0.88)"><path d="M-23 7.5 L-9 -2.5 L-3 -2.5 L-1 5 L-12 7.8 Z" fill="#551a50"/><ellipse cx="-8" cy="0" rx="3.2" ry="3" fill="#3e0f3b"/><path d="M15 -5.5 L4 -5.5 L2 3 L8 4 L9 -1.5 Z" fill="#551a50"/><path d="M-5 0 L4 -6 L8 -3.5 L-1 3 Z" fill="#f4f4f4" stroke="#d0d0d0" stroke-width="0.5"/></g>
<circle cx="1080.8" cy="487.8" r="3.4" fill="#3e0f3b"/>
<text x="1078" y="461.5" font-family="Liberation Sans" font-size="11.3px" fill="#333">Head Tube</text>
<path d="M1018.9 369.8 L1038.9 359.3 L1038.9 384.5 M1018.9 369.8 L1049.4 379.3 L1049.4 413 M1038.9 384.5 L1067.3 401.4 L1049.4 413" fill="none" stroke="#b48a8f" stroke-width="0.8"/>
<path d="M1016.8 401.4 L1020.4 347.3" stroke="#b48a8f" stroke-width="0.8"/><path d="M1021.0 338.3 L1023.4 347.5 L1017.4 347.1 Z" fill="#8d4f5c"/>
<path d="M1016.8 401.4 L1066.0 417.5" stroke="#b48a8f" stroke-width="0.8"/><path d="M1074.6 420.3 L1065.1 420.4 L1067.0 414.7 Z" fill="#8d4f5c"/>
<text x="1016" y="337" font-size="11px" fill="#8a6b72" font-family="Liberation Sans">Z</text><text x="1077" y="427" font-size="11px" fill="#8a6b72" font-family="Liberation Sans">X</text>
<path d="M1131.4 306.8 L1150.3 297.3 L1150.3 329.9 M1131.4 306.8 L1161.9 317.3 L1160.8 348.8 M1150.3 329.9 L1178.7 339.3 L1160.8 348.8" fill="none" stroke="#b48a8f" stroke-width="0.8"/>
<path d="M1129.3 336.2 L1131.9 288.4" stroke="#b48a8f" stroke-width="0.8"/><path d="M1132.4 279.4 L1134.9 288.6 L1128.9 288.2 Z" fill="#8d4f5c"/>
<path d="M1129.3 336.2 L1178.6 355.1" stroke="#b48a8f" stroke-width="0.8"/><path d="M1187.0 358.3 L1177.5 357.9 L1179.7 352.3 Z" fill="#8d4f5c"/>
<path d="M1148.2 329.9 L1158.9 324.2" stroke="#b48a8f" stroke-width="0.8"/><path d="M1166.0 320.4 L1160.4 326.8 L1157.5 321.5 Z" fill="#8d4f5c"/>
<text x="1128" y="275" font-size="11px" fill="#8a6b72" font-family="Liberation Sans">Z</text><text x="1189" y="365" font-size="11px" fill="#8a6b72" font-family="Liberation Sans">X</text><text x="1166" y="322" font-size="11px" fill="#8a6b72" font-family="Liberation Sans">Y</text>
<path d="M846.5 611.7 L884 628" stroke="#3a50d8" stroke-width="1.3"/>
<path d="M885.3 608.2 L904.7 598.1 L904.7 630.4 M885.3 608.2 L916.2 617.5 L916.2 650.6 M899 646.2 L916.2 650.6 L932.8 639.8 L904.7 630.4" fill="none" stroke="#b48a8f" stroke-width="0.8"/>
<path d="M885.3 628.0 L887.1 585.5" stroke="#b48a8f" stroke-width="0.8"/><path d="M887.5 576.5 L890.1 585.6 L884.1 585.4 Z" fill="#8d4f5c"/>
<path d="M916.2 650.6 L933.4 656.2" stroke="#b48a8f" stroke-width="0.8"/><path d="M942.0 659.0 L932.5 659.1 L934.4 653.4 Z" fill="#8d4f5c"/>
<path d="M904.7 630.4 L914.3 624.3" stroke="#b48a8f" stroke-width="0.8"/><path d="M921.0 620.0 L915.9 626.8 L912.6 621.8 Z" fill="#8d4f5c"/>
<text x="883" y="575" font-size="11px" fill="#8a6b72" font-family="Liberation Sans">Z</text><text x="944" y="665" font-size="11px" fill="#8a6b72" font-family="Liberation Sans">X</text><text x="922" y="622" font-size="11px" fill="#8a6b72" font-family="Liberation Sans">Y</text>
<g transform="rotate(-21 873 647)"><rect x="873" y="637.5" width="28" height="19" fill="url(#tube2)"/><path d="M873 637.5 H901 M873 656.5 H901" stroke="#555" stroke-width="0.7"/><ellipse cx="901" cy="647" rx="3.5" ry="9.5" fill="#b8c0c4" stroke="#666" stroke-width="0.6"/><ellipse cx="873" cy="647" rx="6" ry="9.5" fill="#a4acb0" stroke="#333" stroke-width="1.1"/><ellipse cx="872" cy="648" rx="3.5" ry="6" fill="#c0c7ca" stroke="#888" stroke-width="0.6"/></g>
<path d="M868.8 649 L928.5 674.3" stroke="#3a50d8" stroke-width="1.3"/>
<g transform="rotate(-30 1124 693)"><rect x="1124" y="683.5" width="13" height="19" fill="#bcc4c8"/><path d="M1124 683.5H1137M1124 702.5H1137" stroke="#8a9296" stroke-width="0.6"/><ellipse cx="1137" cy="693" rx="4" ry="9.5" fill="#c9d0d3" stroke="#9aa2a6" stroke-width="0.5"/><ellipse cx="1124" cy="693" rx="6.5" ry="9.5" fill="#8d9498" stroke="#2e3236" stroke-width="0.9"/><ellipse cx="1122.5" cy="694" rx="2.5" ry="3.5" fill="#a0a7ab" stroke="#333" stroke-width="0.6"/></g>
<g><ellipse cx="702" cy="557" rx="24" ry="28" transform="rotate(-20 702 557)" fill="#c3c8cb"/><ellipse cx="708" cy="548" rx="14" ry="14" fill="#dfe2e4" opacity="0.8"/><ellipse cx="692" cy="560" rx="18" ry="22" transform="rotate(-20 692 560)" fill="none" stroke="#2e3236" stroke-width="0.9"/><ellipse cx="690" cy="562" rx="11" ry="14" transform="rotate(-20 690 562)" fill="none" stroke="#2e3236" stroke-width="0.9"/><path d="M693 580 L700 603 M708 583 L713 597" stroke="#d98e5e" stroke-width="4"/><path d="M682.0 521.0 L683.1 542.0 L690.9 540.0 Z" fill="#d9833f"/><path d="M690.0 516.0 L691.2 533.2 L698.8 530.8 Z" fill="#d9833f"/><path d="M705 575 L711 590 M716 570 L723 592 M726 566 L733 587" stroke="#e2e4e6" stroke-width="2.2"/><path d="M701.0 511.0 L705.7 530.9 L710.3 529.1 Z" fill="#f0f1f2" stroke="#c8cbcd" stroke-width="0.5"/><path d="M711.0 507.0 L715.2 528.9 L720.8 527.1 Z" fill="#f0f1f2" stroke="#c8cbcd" stroke-width="0.5"/><path d="M694.0 540.0 L706.4 576.7 L713.6 573.3 Z" fill="#f0f1f2" stroke="#c8cbcd" stroke-width="0.5"/><path d="M706.0 534.0 L714.8 571.5 L723.2 568.5 Z" fill="#f0f1f2" stroke="#c8cbcd" stroke-width="0.5"/><path d="M717.0 544.0 L726.6 568.0 L733.4 564.0 Z" fill="#f0f1f2" stroke="#c8cbcd" stroke-width="0.5"/><path d="M703.0 529.0 L713.0 553.7 L719.0 550.3 Z" fill="#f0f1f2" stroke="#c8cbcd" stroke-width="0.5"/><path d="M680 571 L718 551" stroke="#e4e6e8" stroke-width="3"/><path d="M736.0 543.0 L714.4 549.9 L717.6 556.1 Z" fill="#e9ebec" stroke="#c0c3c5" stroke-width="0.5"/><path d="M684 550 L690 548 L694 557 L687 559 Z M680 566 L688 563 L690 569 L682 572 Z M689 569 L696 566 L699 575 L692 577 Z" fill="#4a1446" stroke="#fff" stroke-width="0.6"/></g><text x="702" y="505" font-family="Liberation Sans" font-size="11.3px" fill="#d2d6d9">Road Bump Rear</text><text x="699" y="527" font-family="Liberation Sans" font-size="11.3px" fill="#d2d6d9">Rear Axle</text>
<g><path d="M403 788 L430 777 L456 786 L428 799 Z M403 788 L401 825 L428 837 L428 799 M428 837 L452 825 L456 786" fill="none" stroke="#b8b8b8" stroke-width="0.9"/><path d="M429 795 L429.5 768" stroke="#1040d0" stroke-width="3.5"/><path d="M430 752 L434.5 770 L425 770 Z" fill="#1040d0"/><text x="426" y="749" font-family="Liberation Sans" font-size="10px" fill="#5566cc">Z</text><path d="M443 814 L464 822" stroke="#c02838" stroke-width="4"/><path d="M480 827 L462 817 L460 827 Z" fill="#c02838"/><text x="483" y="832" font-family="Liberation Sans" font-size="10px" fill="#b04050">X</text><path d="M453 797 L461 792 L455 788 Z" fill="#3a9a3a"/><text x="462" y="793" font-family="Liberation Sans" font-size="10px" fill="#55884f">Y</text></g>
</svg>
</body></html>
